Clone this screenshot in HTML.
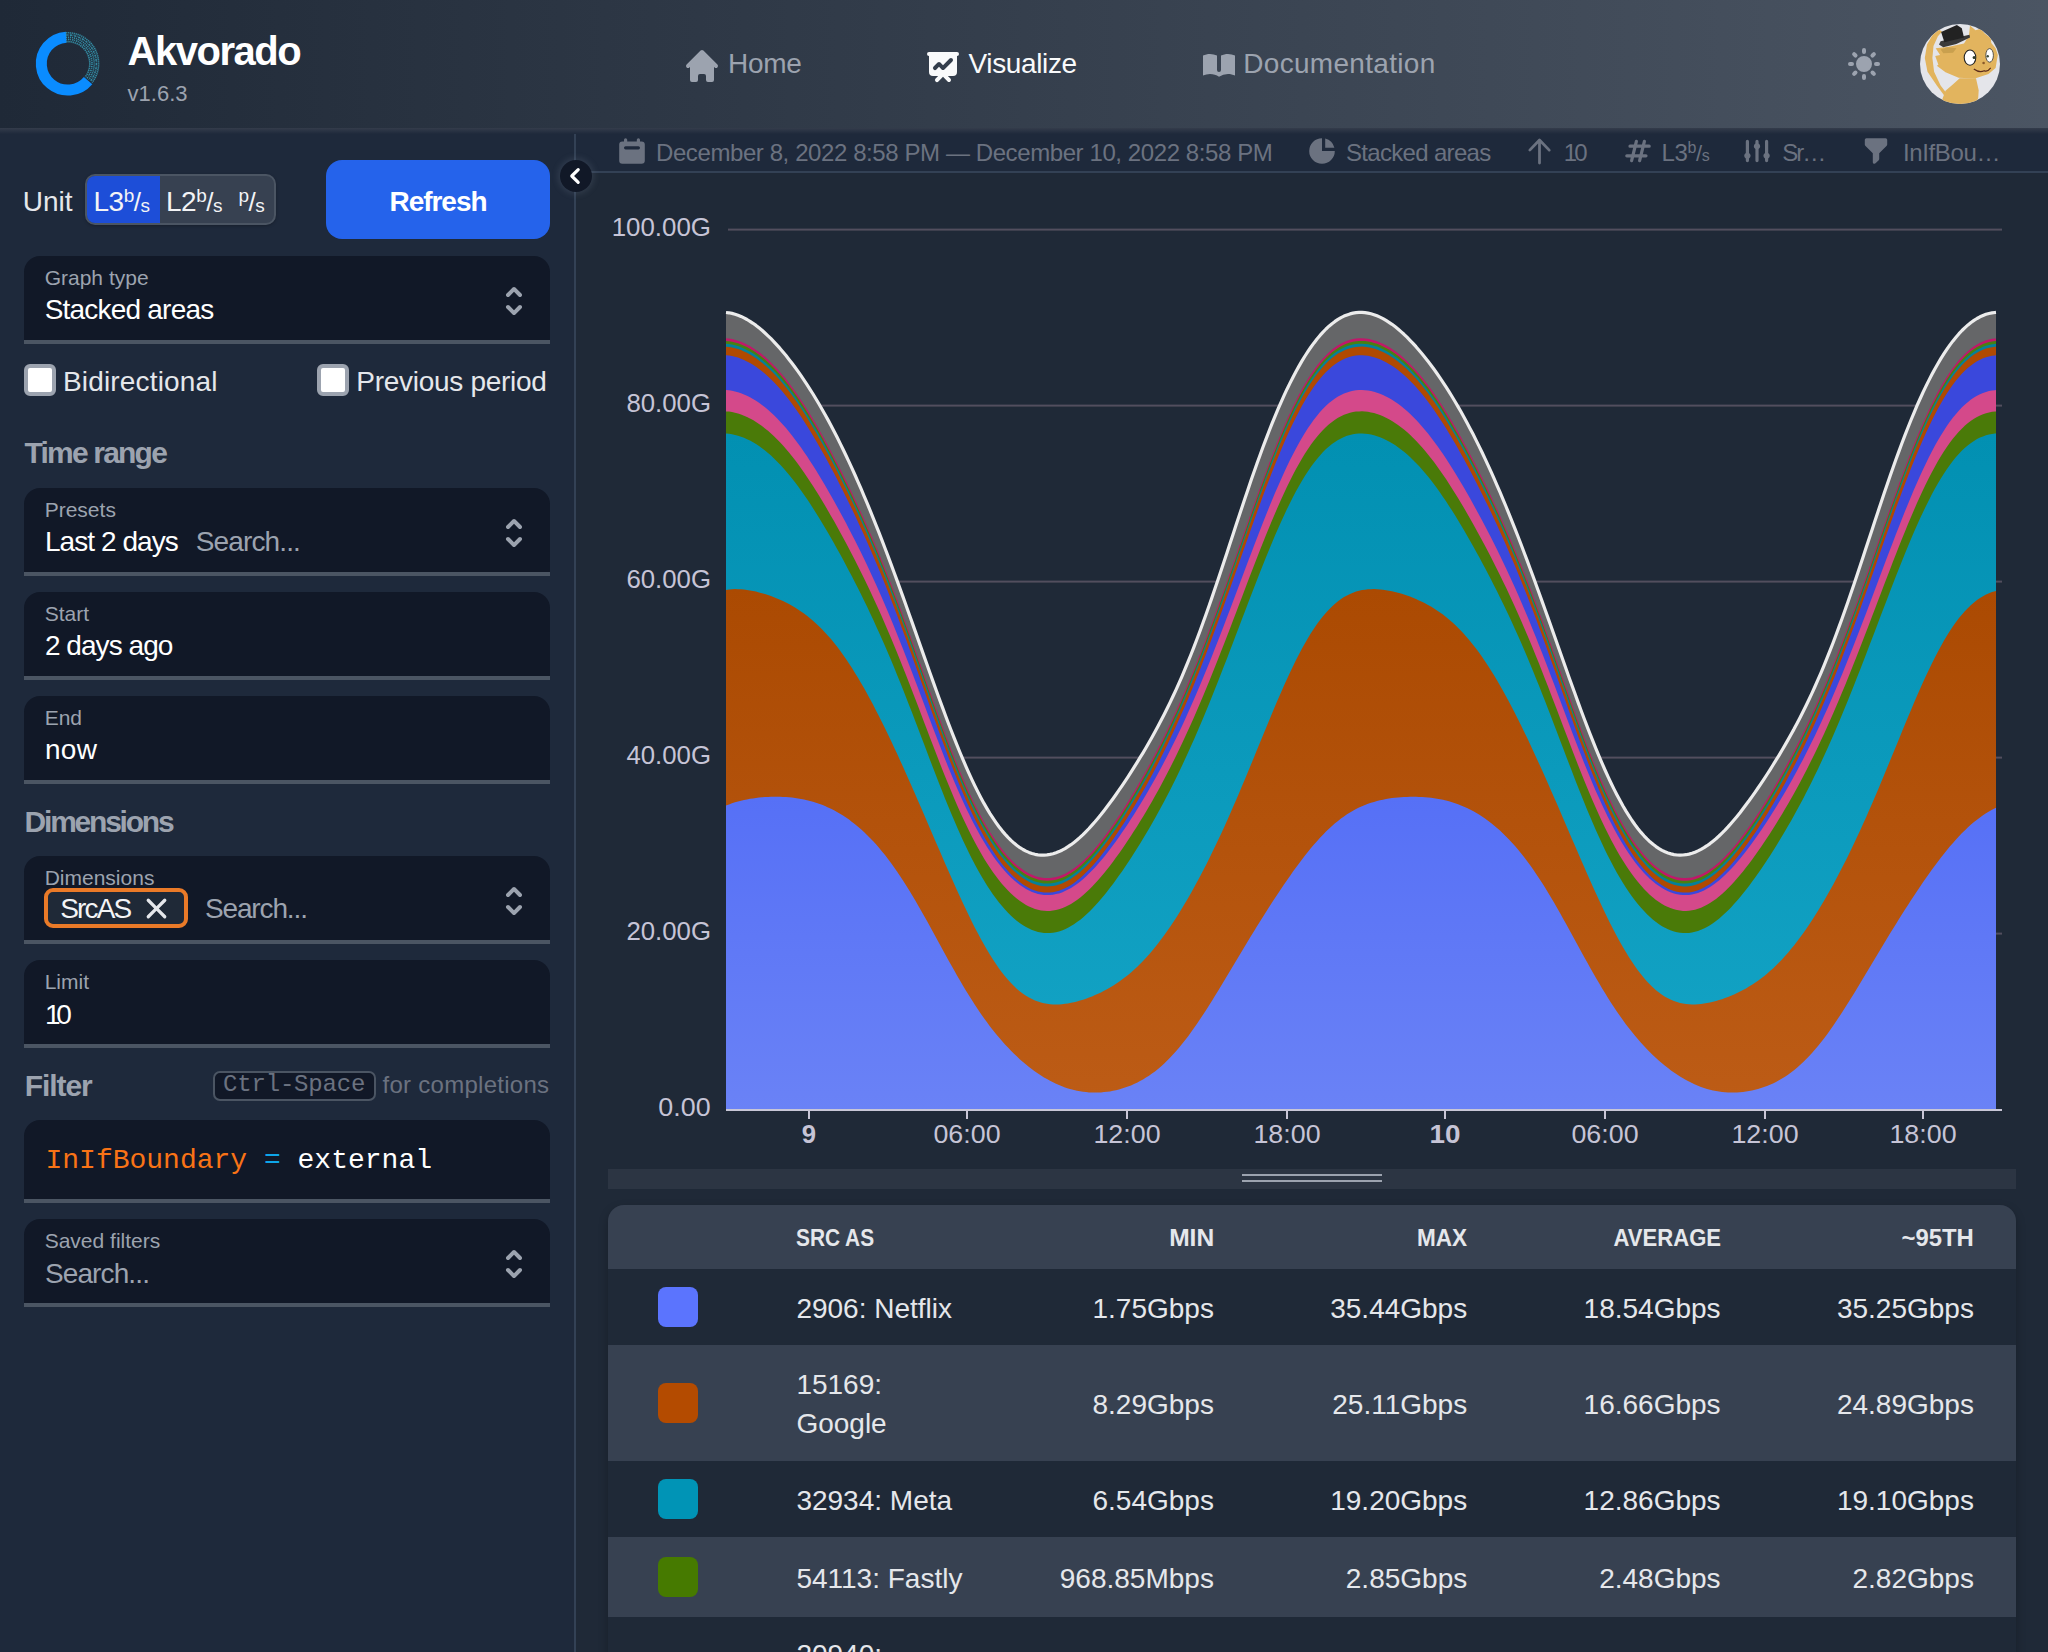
<!DOCTYPE html><html><head><meta charset="utf-8"><style>
html,body{margin:0;padding:0;}
body{width:2048px;height:1652px;overflow:hidden;background:#1f2937;position:relative;font-family:'Liberation Sans',sans-serif;}
.a{position:absolute;}
@media (max-width:1400px){html{zoom:0.5;}}
.t{position:absolute;white-space:nowrap;line-height:1;}

</style></head><body>
<div class="a" style="left:0px;top:0px;width:2048px;height:128px;background:linear-gradient(to right,#1f2937,#4b5563);"></div>
<div class="a" style="left:0px;top:128px;width:576px;height:1524px;background:#1e293b;"></div>
<div class="a" style="left:576px;top:128px;width:1472px;height:45px;background:#1e293b;"></div>
<div class="a" style="left:0px;top:128px;width:2048px;height:6px;background:linear-gradient(to bottom,#343c4b,rgba(30,41,59,0));"></div>
<svg class="a" style="left:28px;top:24px" width="80" height="80" viewBox="0 0 80 80"><circle cx="39.8" cy="39.6" r="26.5" fill="none" stroke="#0a8cff" stroke-width="11" stroke-dasharray="104.07 400" transform="rotate(40 39.8 39.6)"/><path d="M38.27 17.65 A22.0 22.0 0 0 1 57.14 53.14" fill="none" stroke="#38a3bd" stroke-width="1.6" stroke-dasharray="1.4 0.7" opacity="0.8"/><path d="M38.11 15.46 A24.2 24.2 0 0 1 58.87 54.50" fill="none" stroke="#38a3bd" stroke-width="1.6" stroke-dasharray="0.9 0.9 1.6 0.6" opacity="0.8"/><path d="M37.96 13.26 A26.4 26.4 0 0 1 60.60 55.85" fill="none" stroke="#38a3bd" stroke-width="1.6" stroke-dasharray="1.2 0.8" opacity="0.8"/><path d="M37.80 11.07 A28.6 28.6 0 0 1 62.34 57.21" fill="none" stroke="#38a3bd" stroke-width="1.6" stroke-dasharray="2 0.6 0.8 0.8" opacity="0.8"/><path d="M37.65 8.88 A30.8 30.8 0 0 1 64.07 58.56" fill="none" stroke="#38a3bd" stroke-width="1.6" stroke-dasharray="1.3 0.7" opacity="0.8"/></svg>
<div class="t" style="top:30.7px;font-size:40px;color:#ffffff;font-weight:bold;font-family:'Liberation Sans',sans-serif;letter-spacing:-1.46px;left:127.5px;">Akvorado</div>
<div class="t" style="top:82.7px;font-size:22px;color:#9ca3af;font-weight:normal;font-family:'Liberation Sans',sans-serif;letter-spacing:0.02px;left:127.5px;">v1.6.3</div>
<svg class="a" style="left:682.0px;top:46.0px;" width="40.0" height="40.0" viewBox="0 0 20 20"><path fill="#9ca3af" fill-rule="evenodd" d="M10.707 2.293a1 1 0 00-1.414 0l-7 7a1 1 0 001.414 1.414L4 10.414V17a1 1 0 001 1h2a1 1 0 001-1v-2a1 1 0 011-1h2a1 1 0 011 1v2a1 1 0 001 1h2a1 1 0 001-1v-6.586l.293.293a1 1 0 001.414-1.414l-7-7z"/></svg>
<div class="t" style="top:49.7px;font-size:28px;color:#9ca3af;font-weight:normal;font-family:'Liberation Sans',sans-serif;letter-spacing:-0.30px;left:728.0px;">Home</div>
<svg class="a" style="left:923.4px;top:46.0px;" width="40.0" height="40.0" viewBox="0 0 20 20"><path fill="#f9fafb" fill-rule="evenodd" d="M3 3a1 1 0 000 2v8a2 2 0 002 2h2.586l-1.293 1.293a1 1 0 101.414 1.414L10 15.414l2.293 2.293a1 1 0 001.414-1.414L12.414 15H15a2 2 0 002-2V5a1 1 0 100-2H3zm11.707 4.707a1 1 0 00-1.414-1.414L10 9.586 8.707 8.293a1 1 0 00-1.414 0l-2 2a1 1 0 101.414 1.414L8 10.414l1.293 1.293a1 1 0 001.414 0l4-4z"/></svg>
<div class="t" style="top:49.7px;font-size:28px;color:#f9fafb;font-weight:normal;font-family:'Liberation Sans',sans-serif;letter-spacing:-0.36px;left:968.5px;">Visualize</div>
<svg class="a" style="left:1198.8px;top:45.7px;" width="40.0" height="40.0" viewBox="0 0 20 20"><path fill="#9ca3af" fill-rule="evenodd" d="M9 4.804A7.968 7.968 0 005.5 4c-1.255 0-2.443.29-3.5.804v10A7.969 7.969 0 015.5 14c1.669 0 3.218.51 4.5 1.385A7.962 7.962 0 0114.5 14c1.255 0 2.443.29 3.5.804v-10A7.968 7.968 0 0014.5 4c-1.255 0-2.443.29-3.5.804V12a1 1 0 11-2 0V4.804z"/></svg>
<div class="t" style="top:49.7px;font-size:28px;color:#9ca3af;font-weight:normal;font-family:'Liberation Sans',sans-serif;letter-spacing:0.30px;left:1243.3px;">Documentation</div>
<svg class="a" style="left:1844.0px;top:44.0px;" width="40.0" height="40.0" viewBox="0 0 20 20"><path fill="#9ca3af" fill-rule="evenodd" d="M10 2a1 1 0 011 1v1a1 1 0 11-2 0V3a1 1 0 011-1zm4 8a4 4 0 11-8 0 4 4 0 018 0zm-.464 4.95l.707.707a1 1 0 001.414-1.414l-.707-.707a1 1 0 00-1.414 1.414zm2.12-10.607a1 1 0 010 1.414l-.706.707a1 1 0 11-1.414-1.414l.707-.707a1 1 0 011.414 0zM17 11a1 1 0 100-2h-1a1 1 0 100 2h1zm-7 4a1 1 0 011 1v1a1 1 0 11-2 0v-1a1 1 0 011-1zM5.05 6.464A1 1 0 106.465 5.05l-.708-.707a1 1 0 00-1.414 1.414l.707.707zm1.414 8.486l-.707.707a1 1 0 01-1.414-1.414l.707-.707a1 1 0 011.414 1.414zM4 11a1 1 0 100-2H3a1 1 0 000 2h1z"/></svg>
<svg class="a" style="left:1920px;top:24px" width="80" height="80" viewBox="0 0 80 80"><defs><clipPath id="av"><circle cx="40" cy="40" r="40"/></clipPath></defs><g clip-path="url(#av)"><rect width="80" height="80" fill="#e4e5ea"/><polygon points="25.5,73.3 16.8,61.4 7.5,47.7 4.8,34.1 7.0,20.5 13.0,10.2 19.0,5.8 22.2,7.4 17.9,12.3 13.5,22.1 12.4,34.1 14.1,47.7 20.6,61.4 28.8,72.3" fill="#e2b45e"/><polygon points="39.7,54.3 33.1,60.3 25.5,66.8 22.2,75.5 27.7,83.1 54.9,83.1 58.2,73.9 58.7,66.3 56.0,54.3" fill="#e2b45e"/><polygon points="15.7,24.3 20.1,30.9 15.2,31.9 18.4,40.7 16.8,41.8 25.5,48.3 38.6,53.7 54.9,54.6 68.5,49.9 75.6,43.9 77.8,30.9 75.6,24.3 71.3,18.9 70.7,14.0 64.7,9.6 60.9,4.7 55.5,6.3 50.0,1.4 48.9,11.8 44.0,19.4 28.8,22.7" fill="#e2b45e"/><polygon points="20.6,25.4 27.7,23.2 36.4,24.3 33.1,28.7 23.3,29.2" fill="#c9a04e"/><polygon points="19.0,20.5 20.6,17.2 49.5,10.7 50.0,13.4 36.4,20.0 23.3,23.2" fill="#3a3a3a"/><polygon points="21.1,8.0 36.9,0.9 41.8,4.2 44.0,13.4 24.4,18.3" fill="#222222"/><ellipse cx="50.0" cy="33.6" rx="5.8" ry="7.6" fill="#fff" stroke="#222" stroke-width="1.1"/><ellipse cx="69.6" cy="31.4" rx="3.8" ry="6.8" fill="#fff" stroke="#333" stroke-width="0.8"/><circle cx="54.1" cy="33.6" r="1.5" fill="#2a3a2a"/><circle cx="67.7" cy="32.2" r="1.2" fill="#3a4a3a"/><circle cx="63.6" cy="39.0" r="1.3" fill="#8a5a2a"/><path d="M53.8 45.0 Q59.3 49.1 64.2 46.7 Q67.4 48.4 70.7 43.9" stroke="#5a2a1a" stroke-width="1.1" fill="none"/></g></svg>
<div class="a" style="left:574px;top:134px;width:2px;height:1518px;background:#334155;"></div>
<div class="t" style="top:187.5px;font-size:28px;color:#e5e7eb;font-weight:normal;font-family:'Liberation Sans',sans-serif;letter-spacing:0.00px;left:22.7px;">Unit</div>
<div class="a" style="left:85px;top:174px;width:191px;height:51px;box-sizing:border-box;border:2px solid #4b5563;border-radius:10px;background:#374151;overflow:hidden;box-shadow:0 1px 3px rgba(0,0,0,.25);"></div>
<div class="a" style="left:87px;top:176px;width:73px;height:47px;background:#1d4ed8;border-radius:8px 0 0 8px;"></div>
<div class="t" style="left:93.5px;top:187.5px;font-size:28px;color:#f3f4f6;letter-spacing:-0.5px">L3<span style="font-size:19px;position:relative;top:-9px;">b</span><span style="font-size:26px;">/</span><span style="font-size:19px;position:relative;top:1px;">s</span></div>
<div class="t" style="left:166.0px;top:187.5px;font-size:28px;color:#f3f4f6;letter-spacing:-0.5px">L2<span style="font-size:19px;position:relative;top:-9px;">b</span><span style="font-size:26px;">/</span><span style="font-size:19px;position:relative;top:1px;">s</span></div>
<div class="t" style="left:238.5px;top:187.5px;font-size:28px;color:#f3f4f6;letter-spacing:-0.5px"><span style="font-size:19px;position:relative;top:-9px;">p</span><span style="font-size:26px;">/</span><span style="font-size:19px;position:relative;top:1px;">s</span></div>
<div class="a" style="left:326px;top:160px;width:224px;height:79px;background:#2563eb;border-radius:16px;"></div>
<div class="t" style="top:187.7px;font-size:28px;color:#ffffff;font-weight:bold;font-family:'Liberation Sans',sans-serif;letter-spacing:-1.05px;left:438.0px;transform:translateX(-50%);">Refresh</div>
<div class="a" style="left:24px;top:256px;width:526px;height:84px;background:#111827;border-radius:16px 16px 0 0;"></div>
<div class="a" style="left:24px;top:340px;width:526px;height:4px;background:#4b5563;"></div>
<div class="t" style="top:266.8px;font-size:21px;color:#9ca3af;font-weight:normal;font-family:'Liberation Sans',sans-serif;left:44.7px;">Graph type</div>
<div class="t" style="top:295.8px;font-size:28px;color:#ffffff;font-weight:normal;font-family:'Liberation Sans',sans-serif;letter-spacing:-0.79px;left:44.7px;">Stacked areas</div>
<svg class="a" style="left:493.5px;top:280.5px;" width="40.0" height="40.0" viewBox="0 0 20 20"><path fill="#9ca3af" fill-rule="evenodd" d="M10 3a1 1 0 01.707.293l3 3a1 1 0 01-1.414 1.414L10 5.414 7.707 7.707a1 1 0 01-1.414-1.414l3-3A1 1 0 0110 3zm-3.707 9.293a1 1 0 011.414 0L10 14.586l2.293-2.293a1 1 0 011.414 1.414l-3 3a1 1 0 01-1.414 0l-3-3a1 1 0 010-1.414z"/></svg>
<div class="a" style="left:24px;top:364px;width:32px;height:32px;box-sizing:border-box;background:#ffffff;border:4px solid #9ca3af;border-radius:6px;"></div>
<div class="t" style="top:367.6px;font-size:28px;color:#e5e7eb;font-weight:normal;font-family:'Liberation Sans',sans-serif;letter-spacing:0.16px;left:63.0px;">Bidirectional</div>
<div class="a" style="left:317px;top:364px;width:32px;height:32px;box-sizing:border-box;background:#ffffff;border:4px solid #9ca3af;border-radius:6px;"></div>
<div class="t" style="top:367.6px;font-size:28px;color:#e5e7eb;font-weight:normal;font-family:'Liberation Sans',sans-serif;letter-spacing:-0.28px;left:356.3px;">Previous period</div>
<div class="t" style="top:438.3px;font-size:30px;color:#9ca3af;font-weight:bold;font-family:'Liberation Sans',sans-serif;letter-spacing:-1.81px;left:24.6px;">Time range</div>
<div class="a" style="left:24px;top:488px;width:526px;height:84px;background:#111827;border-radius:16px 16px 0 0;"></div>
<div class="a" style="left:24px;top:572px;width:526px;height:4px;background:#4b5563;"></div>
<div class="t" style="top:498.8px;font-size:21px;color:#9ca3af;font-weight:normal;font-family:'Liberation Sans',sans-serif;left:44.7px;">Presets</div>
<div class="t" style="top:527.5px;font-size:28px;color:#ffffff;font-weight:normal;font-family:'Liberation Sans',sans-serif;letter-spacing:-0.93px;left:44.9px;">Last 2 days</div>
<div class="t" style="top:527.5px;font-size:28px;color:#9ca3af;font-weight:normal;font-family:'Liberation Sans',sans-serif;letter-spacing:-0.88px;left:195.8px;">Search...</div>
<svg class="a" style="left:493.5px;top:512.5px;" width="40.0" height="40.0" viewBox="0 0 20 20"><path fill="#9ca3af" fill-rule="evenodd" d="M10 3a1 1 0 01.707.293l3 3a1 1 0 01-1.414 1.414L10 5.414 7.707 7.707a1 1 0 01-1.414-1.414l3-3A1 1 0 0110 3zm-3.707 9.293a1 1 0 011.414 0L10 14.586l2.293-2.293a1 1 0 011.414 1.414l-3 3a1 1 0 01-1.414 0l-3-3a1 1 0 010-1.414z"/></svg>
<div class="a" style="left:24px;top:592px;width:526px;height:84px;background:#111827;border-radius:16px 16px 0 0;"></div>
<div class="a" style="left:24px;top:676px;width:526px;height:4px;background:#4b5563;"></div>
<div class="t" style="top:602.8px;font-size:21px;color:#9ca3af;font-weight:normal;font-family:'Liberation Sans',sans-serif;left:44.7px;">Start</div>
<div class="t" style="top:632.3px;font-size:28px;color:#ffffff;font-weight:normal;font-family:'Liberation Sans',sans-serif;letter-spacing:-0.95px;left:44.9px;">2 days ago</div>
<div class="a" style="left:24px;top:696px;width:526px;height:84px;background:#111827;border-radius:16px 16px 0 0;"></div>
<div class="a" style="left:24px;top:780px;width:526px;height:4px;background:#4b5563;"></div>
<div class="t" style="top:706.8px;font-size:21px;color:#9ca3af;font-weight:normal;font-family:'Liberation Sans',sans-serif;left:44.7px;">End</div>
<div class="t" style="top:736.3px;font-size:28px;color:#ffffff;font-weight:normal;font-family:'Liberation Sans',sans-serif;letter-spacing:0.31px;left:44.9px;">now</div>
<div class="t" style="top:806.5px;font-size:30px;color:#9ca3af;font-weight:bold;font-family:'Liberation Sans',sans-serif;letter-spacing:-2.23px;left:24.6px;">Dimensions</div>
<div class="a" style="left:24px;top:856px;width:526px;height:84px;background:#111827;border-radius:16px 16px 0 0;"></div>
<div class="a" style="left:24px;top:940px;width:526px;height:4px;background:#4b5563;"></div>
<div class="t" style="top:866.8px;font-size:21px;color:#9ca3af;font-weight:normal;font-family:'Liberation Sans',sans-serif;left:44.7px;">Dimensions</div>
<div class="a" style="left:44px;top:888px;width:144px;height:40px;box-sizing:border-box;background:#1f2937;border:4px solid #ea7a28;border-radius:9px;"></div>
<div class="t" style="top:895.2px;font-size:28px;color:#f3f4f6;font-weight:normal;font-family:'Liberation Sans',sans-serif;letter-spacing:-1.84px;left:60.2px;">SrcAS</div>
<svg class="a" style="left:139.6px;top:891.8px;" width="33.0" height="33.0" viewBox="0 0 20 20"><path fill="#e5e7eb" fill-rule="evenodd" d="M4.293 4.293a1 1 0 011.414 0L10 8.586l4.293-4.293a1 1 0 111.414 1.414L11.414 10l4.293 4.293a1 1 0 01-1.414 1.414L10 11.414l-4.293 4.293a1 1 0 01-1.414-1.414L8.586 10 4.293 5.707a1 1 0 010-1.414z"/></svg>
<div class="t" style="top:895.2px;font-size:28px;color:#9ca3af;font-weight:normal;font-family:'Liberation Sans',sans-serif;letter-spacing:-1.13px;left:204.9px;">Search...</div>
<svg class="a" style="left:493.5px;top:880.5px;" width="40.0" height="40.0" viewBox="0 0 20 20"><path fill="#9ca3af" fill-rule="evenodd" d="M10 3a1 1 0 01.707.293l3 3a1 1 0 01-1.414 1.414L10 5.414 7.707 7.707a1 1 0 01-1.414-1.414l3-3A1 1 0 0110 3zm-3.707 9.293a1 1 0 011.414 0L10 14.586l2.293-2.293a1 1 0 011.414 1.414l-3 3a1 1 0 01-1.414 0l-3-3a1 1 0 010-1.414z"/></svg>
<div class="a" style="left:24px;top:960px;width:526px;height:84px;background:#111827;border-radius:16px 16px 0 0;"></div>
<div class="a" style="left:24px;top:1044px;width:526px;height:4px;background:#4b5563;"></div>
<div class="t" style="top:970.8px;font-size:21px;color:#9ca3af;font-weight:normal;font-family:'Liberation Sans',sans-serif;left:44.7px;">Limit</div>
<div class="t" style="top:1000.7px;font-size:28px;color:#ffffff;font-weight:normal;font-family:'Liberation Sans',sans-serif;letter-spacing:-4.16px;left:44.9px;">10</div>
<div class="t" style="top:1070.6px;font-size:30px;color:#9ca3af;font-weight:bold;font-family:'Liberation Sans',sans-serif;letter-spacing:-1.07px;left:24.8px;">Filter</div>
<div class="a" style="left:213px;top:1071px;width:163px;height:30px;box-sizing:border-box;border:2px solid #4b5563;border-radius:7px;background:#111827;"></div>
<div class="t" style="top:1073.1px;font-size:24px;color:#6b7280;font-weight:normal;font-family:'Liberation Mono',monospace;letter-spacing:-0.18px;left:223.0px;">Ctrl-Space</div>
<div class="t" style="top:1073.1px;font-size:24px;color:#6b7280;font-weight:normal;font-family:'Liberation Sans',sans-serif;letter-spacing:0.27px;right:1498.7px;">for completions</div>
<div class="a" style="left:24px;top:1120px;width:526px;height:79px;background:#111827;border-radius:16px 16px 0 0;"></div>
<div class="a" style="left:24px;top:1199px;width:526px;height:4px;background:#4b5563;"></div>
<div class="t" style="left:45.5px;top:1146.9px;font-size:28px;font-family:'Liberation Mono',monospace;color:#fff;"><span style="color:#f97316">InIfBoundary</span> <span style="color:#0ea5e9">=</span> external</div>
<div class="a" style="left:24px;top:1219px;width:526px;height:84px;background:#111827;border-radius:16px 16px 0 0;"></div>
<div class="a" style="left:24px;top:1303px;width:526px;height:4px;background:#4b5563;"></div>
<div class="t" style="top:1229.8px;font-size:21px;color:#9ca3af;font-weight:normal;font-family:'Liberation Sans',sans-serif;left:44.7px;">Saved filters</div>
<div class="t" style="top:1259.7px;font-size:28px;color:#9ca3af;font-weight:normal;font-family:'Liberation Sans',sans-serif;letter-spacing:-0.88px;left:44.9px;">Search...</div>
<svg class="a" style="left:493.5px;top:1243.5px;" width="40.0" height="40.0" viewBox="0 0 20 20"><path fill="#9ca3af" fill-rule="evenodd" d="M10 3a1 1 0 01.707.293l3 3a1 1 0 01-1.414 1.414L10 5.414 7.707 7.707a1 1 0 01-1.414-1.414l3-3A1 1 0 0110 3zm-3.707 9.293a1 1 0 011.414 0L10 14.586l2.293-2.293a1 1 0 011.414 1.414l-3 3a1 1 0 01-1.414 0l-3-3a1 1 0 010-1.414z"/></svg>
<div class="a" style="left:576px;top:171px;width:1472px;height:2px;background:#334155;"></div>
<svg class="a" style="left:615.7px;top:134.8px;" width="32.0" height="32.0" viewBox="0 0 20 20"><path fill="#6b7280" fill-rule="evenodd" d="M6 2a1 1 0 00-1 1v1H4a2 2 0 00-2 2v10a2 2 0 002 2h12a2 2 0 002-2V6a2 2 0 00-2-2h-1V3a1 1 0 10-2 0v1H7V3a1 1 0 00-1-1zm0 5a1 1 0 000 2h8a1 1 0 100-2H6z"/></svg>
<div class="t" style="top:140.6px;font-size:24px;color:#6b7280;font-weight:normal;font-family:'Liberation Sans',sans-serif;letter-spacing:-0.41px;left:656.0px;">December 8, 2022 8:58 PM — December 10, 2022 8:58 PM</div>
<svg class="a" style="left:1305.8px;top:134.8px;" width="32.0" height="32.0" viewBox="0 0 20 20"><path fill="#6b7280" fill-rule="evenodd" d="M2 10a8 8 0 018-8v8h8a8 8 0 11-16 0z M12 2.252A8.014 8.014 0 0117.748 8H12V2.252z"/></svg>
<div class="t" style="top:140.6px;font-size:24px;color:#6b7280;font-weight:normal;font-family:'Liberation Sans',sans-serif;letter-spacing:-0.68px;left:1346.0px;">Stacked areas</div>
<svg class="a" style="left:1521.0px;top:132.9px;" width="37.0" height="37.0" viewBox="0 0 20 20"><path fill="#6b7280" fill-rule="evenodd" d="M10 17a.75.75 0 01-.75-.75V5.612L5.29 9.77a.75.75 0 01-1.08-1.04l5.25-5.5a.75.75 0 011.08 0l5.25 5.5a.75.75 0 11-1.08 1.04l-3.96-4.158V16.25A.75.75 0 0110 17z"/></svg>
<div class="t" style="top:140.6px;font-size:24px;color:#6b7280;font-weight:normal;font-family:'Liberation Sans',sans-serif;letter-spacing:-2.69px;left:1563.7px;">10</div>
<svg class="a" style="left:1621.8px;top:134.8px;" width="32.0" height="32.0" viewBox="0 0 20 20"><path fill="#6b7280" fill-rule="evenodd" d="M9.243 3.03a1 1 0 01.727 1.213L9.53 6h2.94l.56-2.243a1 1 0 111.94.486L14.53 6H17a1 1 0 110 2h-2.97l-1 4H15a1 1 0 110 2h-2.47l-.56 2.242a1 1 0 11-1.94-.485L10.47 14H7.53l-.56 2.242a1 1 0 11-1.94-.485L5.47 14H3a1 1 0 110-2h2.97l1-4H5a1 1 0 110-2h2.47l.56-2.243a1 1 0 011.213-.727zM9.03 8l-1 4h2.938l1-4H9.031z"/></svg>
<div class="t" style="left:1661.5px;top:140.6px;font-size:24px;color:#6b7280;letter-spacing:-0.4px">L3<span style="font-size:16px;position:relative;top:-8px;">b</span><span style="font-size:22px;">/</span><span style="font-size:16px;">s</span></div>
<svg class="a" style="left:1741.4px;top:134.8px;" width="32.0" height="32.0" viewBox="0 0 20 20"><path fill="#6b7280" fill-rule="evenodd" d="M5 4a1 1 0 00-2 0v7.268a2 2 0 000 3.464V16a1 1 0 102 0v-1.268a2 2 0 000-3.464V4zM11 4a1 1 0 10-2 0v1.268a2 2 0 000 3.464V16a1 1 0 102 0V8.732a2 2 0 000-3.464V4zM16 3a1 1 0 011 1v7.268a2 2 0 010 3.464V16a1 1 0 11-2 0v-1.268a2 2 0 010-3.464V4a1 1 0 011-1z"/></svg>
<div class="t" style="top:140.6px;font-size:24px;color:#6b7280;font-weight:normal;font-family:'Liberation Sans',sans-serif;letter-spacing:-1.91px;left:1782.2px;">Sr…</div>
<svg class="a" style="left:1860.2px;top:134.8px;" width="32.0" height="32.0" viewBox="0 0 20 20"><path fill="#6b7280" fill-rule="evenodd" d="M3 3a1 1 0 011-1h12a1 1 0 011 1v3a1 1 0 01-.293.707L12 11.414V15a1 1 0 01-.293.707l-2 2A1 1 0 018 17v-5.586L3.293 6.707A1 1 0 013 6V3z"/></svg>
<div class="t" style="top:140.6px;font-size:24px;color:#6b7280;font-weight:normal;font-family:'Liberation Sans',sans-serif;letter-spacing:-0.35px;left:1902.9px;">InIfBou…</div>
<svg class="a" style="left:0;top:0" width="2048" height="1652" viewBox="0 0 2048 1652"><rect x="728" y="228.6" width="1274" height="2" fill="#524e5e"/><rect x="728" y="404.6" width="1274" height="2" fill="#524e5e"/><rect x="728" y="580.6" width="1274" height="2" fill="#524e5e"/><rect x="728" y="756.6" width="1274" height="2" fill="#524e5e"/><rect x="728" y="932.6" width="1274" height="2" fill="#524e5e"/><defs><linearGradient id="gN" x1="0" y1="0" x2="0" y2="1" gradientUnits="objectBoundingBox"><stop offset="0" stop-color="#5670f6"/><stop offset="1" stop-color="#6a82f6"/></linearGradient><linearGradient id="gG" x1="0" y1="0" x2="0" y2="1"><stop offset="0" stop-color="#ab4a02"/><stop offset="1" stop-color="#bd5c16"/></linearGradient><linearGradient id="gM" x1="0" y1="0" x2="0" y2="1"><stop offset="0" stop-color="#0290b2"/><stop offset="1" stop-color="#14a4c6"/></linearGradient></defs><polygon points="726.0,1110 726.0,312.5 729.0,312.8 732.0,313.4 735.0,314.2 738.0,315.2 741.0,316.4 744.0,317.9 747.0,319.5 750.0,321.3 753.0,323.3 756.0,325.4 759.0,327.8 762.0,330.3 765.0,333.0 768.0,335.8 771.0,338.7 774.0,341.8 777.0,345.1 780.0,348.4 783.0,352.0 786.0,355.6 789.0,359.4 792.0,363.2 795.0,367.3 798.0,371.4 801.0,375.7 804.0,380.1 807.0,384.6 810.0,389.3 813.0,394.0 816.0,399.0 819.0,404.0 822.0,409.2 825.0,414.5 828.0,419.9 831.0,425.5 834.0,431.2 837.0,437.1 840.0,443.1 843.0,449.2 846.0,455.5 849.0,461.9 852.0,468.4 855.0,475.0 858.0,481.8 861.0,488.7 864.0,495.8 867.0,502.9 870.0,510.2 873.0,517.6 876.0,525.1 879.0,532.7 882.0,540.4 885.0,548.2 888.0,556.1 891.0,564.1 894.0,572.2 897.0,580.4 900.0,588.6 903.0,596.9 906.0,605.3 909.0,613.7 912.0,622.1 915.0,630.6 918.0,639.1 921.0,647.6 924.0,656.1 927.0,664.5 930.0,673.0 933.0,681.4 936.0,689.7 939.0,698.0 942.0,706.1 945.0,714.2 948.0,722.2 951.0,730.0 954.0,737.7 957.0,745.2 960.0,752.5 963.0,759.6 966.0,766.6 969.0,773.3 972.0,779.8 975.0,786.1 978.0,792.1 981.0,797.9 984.0,803.4 987.0,808.6 990.0,813.6 993.0,818.2 996.0,822.6 999.0,826.8 1002.0,830.6 1005.0,834.1 1008.0,837.4 1011.0,840.4 1014.0,843.1 1017.0,845.5 1020.0,847.7 1023.0,849.5 1026.0,851.1 1029.0,852.4 1032.0,853.5 1035.0,854.3 1038.0,854.8 1041.0,855.1 1044.0,855.1 1047.0,854.9 1050.0,854.4 1053.0,853.7 1056.0,852.7 1059.0,851.6 1062.0,850.2 1065.0,848.6 1068.0,846.7 1071.0,844.7 1074.0,842.4 1077.0,840.0 1080.0,837.4 1083.0,834.6 1086.0,831.6 1089.0,828.5 1092.0,825.2 1095.0,821.8 1098.0,818.2 1101.0,814.6 1104.0,810.7 1107.0,806.8 1110.0,802.8 1113.0,798.7 1116.0,794.5 1119.0,790.2 1122.0,785.8 1125.0,781.3 1128.0,776.8 1131.0,772.1 1134.0,767.4 1137.0,762.6 1140.0,757.7 1143.0,752.8 1146.0,747.7 1149.0,742.5 1152.0,737.2 1155.0,731.8 1158.0,726.3 1161.0,720.6 1164.0,714.8 1167.0,708.8 1170.0,702.6 1173.0,696.3 1176.0,689.8 1179.0,683.1 1182.0,676.3 1185.0,669.2 1188.0,661.9 1191.0,654.5 1194.0,646.9 1197.0,639.0 1200.0,631.0 1203.0,622.8 1206.0,614.5 1209.0,606.0 1212.0,597.4 1215.0,588.6 1218.0,579.7 1221.0,570.8 1224.0,561.8 1227.0,552.7 1230.0,543.6 1233.0,534.5 1236.0,525.3 1239.0,516.3 1242.0,507.2 1245.0,498.3 1248.0,489.4 1251.0,480.6 1254.0,472.0 1257.0,463.5 1260.0,455.2 1263.0,447.0 1266.0,439.1 1269.0,431.3 1272.0,423.7 1275.0,416.4 1278.0,409.2 1281.0,402.3 1284.0,395.7 1287.0,389.2 1290.0,383.1 1293.0,377.2 1296.0,371.5 1299.0,366.1 1302.0,360.9 1305.0,356.0 1308.0,351.4 1311.0,347.0 1314.0,342.9 1317.0,339.0 1320.0,335.4 1323.0,332.1 1326.0,329.0 1329.0,326.2 1332.0,323.7 1335.0,321.4 1338.0,319.4 1341.0,317.6 1344.0,316.1 1347.0,314.9 1350.0,313.9 1353.0,313.1 1356.0,312.6 1359.0,312.4 1362.0,312.4 1365.0,312.6 1368.0,313.1 1371.0,313.8 1374.0,314.7 1377.0,315.8 1380.0,317.1 1383.0,318.6 1386.0,320.4 1389.0,322.3 1392.0,324.3 1395.0,326.6 1398.0,329.0 1401.0,331.6 1404.0,334.3 1407.0,337.2 1410.0,340.3 1413.0,343.4 1416.0,346.7 1419.0,350.2 1422.0,353.8 1425.0,357.5 1428.0,361.3 1431.0,365.2 1434.0,369.3 1437.0,373.5 1440.0,377.9 1443.0,382.3 1446.0,386.9 1449.0,391.6 1452.0,396.5 1455.0,401.5 1458.0,406.6 1461.0,411.8 1464.0,417.2 1467.0,422.7 1470.0,428.4 1473.0,434.1 1476.0,440.1 1479.0,446.1 1482.0,452.3 1485.0,458.6 1488.0,465.1 1491.0,471.7 1494.0,478.4 1497.0,485.3 1500.0,492.2 1503.0,499.3 1506.0,506.5 1509.0,513.9 1512.0,521.3 1515.0,528.9 1518.0,536.5 1521.0,544.3 1524.0,552.2 1527.0,560.1 1530.0,568.2 1533.0,576.3 1536.0,584.5 1539.0,592.8 1542.0,601.1 1545.0,609.5 1548.0,617.9 1551.0,626.3 1554.0,634.8 1557.0,643.3 1560.0,651.8 1563.0,660.3 1566.0,668.8 1569.0,677.2 1572.0,685.5 1575.0,693.8 1578.0,702.1 1581.0,710.2 1584.0,718.2 1587.0,726.1 1590.0,733.8 1593.0,741.4 1596.0,748.9 1599.0,756.1 1602.0,763.1 1605.0,770.0 1608.0,776.6 1611.0,783.0 1614.0,789.1 1617.0,795.0 1620.0,800.6 1623.0,806.0 1626.0,811.1 1629.0,815.9 1632.0,820.5 1635.0,824.7 1638.0,828.7 1641.0,832.4 1644.0,835.8 1647.0,838.9 1650.0,841.8 1653.0,844.3 1656.0,846.6 1659.0,848.6 1662.0,850.4 1665.0,851.8 1668.0,853.0 1671.0,853.9 1674.0,854.6 1677.0,855.0 1680.0,855.1 1683.0,855.0 1686.0,854.7 1689.0,854.1 1692.0,853.2 1695.0,852.2 1698.0,850.9 1701.0,849.4 1704.0,847.7 1707.0,845.7 1710.0,843.6 1713.0,841.2 1716.0,838.7 1719.0,836.0 1722.0,833.1 1725.0,830.1 1728.0,826.9 1731.0,823.5 1734.0,820.0 1737.0,816.4 1740.0,812.7 1743.0,808.8 1746.0,804.8 1749.0,800.8 1752.0,796.6 1755.0,792.3 1758.0,788.0 1761.0,783.6 1764.0,779.1 1767.0,774.5 1770.0,769.8 1773.0,765.0 1776.0,760.2 1779.0,755.3 1782.0,750.2 1785.0,745.1 1788.0,739.9 1791.0,734.5 1794.0,729.1 1797.0,723.4 1800.0,717.7 1803.0,711.8 1806.0,705.7 1809.0,699.5 1812.0,693.1 1815.0,686.5 1818.0,679.7 1821.0,672.8 1824.0,665.6 1827.0,658.2 1830.0,650.7 1833.0,643.0 1836.0,635.0 1839.0,626.9 1842.0,618.7 1845.0,610.3 1848.0,601.7 1851.0,593.0 1854.0,584.2 1857.0,575.3 1860.0,566.3 1863.0,557.2 1866.0,548.1 1869.0,539.0 1872.0,529.9 1875.0,520.8 1878.0,511.7 1881.0,502.7 1884.0,493.8 1887.0,485.0 1890.0,476.3 1893.0,467.8 1896.0,459.3 1899.0,451.1 1902.0,443.0 1905.0,435.1 1908.0,427.5 1911.0,420.0 1914.0,412.8 1917.0,405.7 1920.0,399.0 1923.0,392.4 1926.0,386.1 1929.0,380.1 1932.0,374.3 1935.0,368.7 1938.0,363.5 1941.0,358.4 1944.0,353.7 1947.0,349.2 1950.0,344.9 1953.0,340.9 1956.0,337.2 1959.0,333.7 1962.0,330.5 1965.0,327.6 1968.0,324.9 1971.0,322.5 1974.0,320.4 1977.0,318.5 1980.0,316.8 1983.0,315.5 1986.0,314.3 1989.0,313.5 1992.0,312.9 1995.0,312.5 1996.0,312.4 1996.0,1110" fill="#656668"/><polygon points="726.0,1110 726.0,338.3 729.0,338.6 732.0,339.1 735.0,339.8 738.0,340.7 741.0,341.8 744.0,343.0 747.0,344.5 750.0,346.1 753.0,347.9 756.0,349.9 759.0,352.0 762.0,354.3 765.0,356.8 768.0,359.5 771.0,362.4 774.0,365.4 777.0,368.6 780.0,371.9 783.0,375.5 786.0,379.1 789.0,383.0 792.0,387.0 795.0,391.1 798.0,395.4 801.0,399.9 804.0,404.5 807.0,409.2 810.0,414.1 813.0,419.0 816.0,424.1 819.0,429.3 822.0,434.7 825.0,440.1 828.0,445.6 831.0,451.2 834.0,456.9 837.0,462.7 840.0,468.6 843.0,474.5 846.0,480.6 849.0,486.7 852.0,492.9 855.0,499.3 858.0,505.7 861.0,512.2 864.0,518.8 867.0,525.5 870.0,532.4 873.0,539.3 876.0,546.4 879.0,553.6 882.0,560.9 885.0,568.3 888.0,575.9 891.0,583.6 894.0,591.4 897.0,599.3 900.0,607.3 903.0,615.5 906.0,623.7 909.0,632.0 912.0,640.4 915.0,648.8 918.0,657.3 921.0,665.8 924.0,674.3 927.0,682.9 930.0,691.4 933.0,699.8 936.0,708.2 939.0,716.6 942.0,724.8 945.0,732.9 948.0,740.9 951.0,748.7 954.0,756.4 957.0,763.9 960.0,771.2 963.0,778.3 966.0,785.2 969.0,791.9 972.0,798.4 975.0,804.6 978.0,810.5 981.0,816.3 984.0,821.7 987.0,827.0 990.0,831.9 993.0,836.6 996.0,841.1 999.0,845.3 1002.0,849.3 1005.0,853.0 1008.0,856.4 1011.0,859.6 1014.0,862.5 1017.0,865.2 1020.0,867.6 1023.0,869.8 1026.0,871.7 1029.0,873.4 1032.0,874.8 1035.0,876.0 1038.0,876.9 1041.0,877.5 1044.0,877.9 1047.0,878.1 1050.0,878.0 1053.0,877.6 1056.0,877.0 1059.0,876.2 1062.0,875.1 1065.0,873.7 1068.0,872.1 1071.0,870.3 1074.0,868.3 1077.0,866.0 1080.0,863.6 1083.0,860.9 1086.0,858.0 1089.0,854.9 1092.0,851.7 1095.0,848.3 1098.0,844.7 1101.0,841.0 1104.0,837.1 1107.0,833.1 1110.0,828.9 1113.0,824.7 1116.0,820.3 1119.0,815.8 1122.0,811.2 1125.0,806.5 1128.0,801.7 1131.0,796.8 1134.0,791.8 1137.0,786.7 1140.0,781.5 1143.0,776.3 1146.0,770.9 1149.0,765.4 1152.0,759.8 1155.0,754.1 1158.0,748.3 1161.0,742.4 1164.0,736.3 1167.0,730.2 1170.0,723.9 1173.0,717.5 1176.0,710.9 1179.0,704.3 1182.0,697.5 1185.0,690.5 1188.0,683.4 1191.0,676.2 1194.0,668.9 1197.0,661.5 1200.0,653.9 1203.0,646.2 1206.0,638.4 1209.0,630.4 1212.0,622.4 1215.0,614.3 1218.0,606.0 1221.0,597.7 1224.0,589.4 1227.0,580.9 1230.0,572.5 1233.0,563.9 1236.0,555.4 1239.0,546.8 1242.0,538.3 1245.0,529.7 1248.0,521.2 1251.0,512.7 1254.0,504.3 1257.0,495.9 1260.0,487.6 1263.0,479.5 1266.0,471.4 1269.0,463.5 1272.0,455.7 1275.0,448.1 1278.0,440.6 1281.0,433.4 1284.0,426.3 1287.0,419.5 1290.0,412.9 1293.0,406.6 1296.0,400.5 1299.0,394.6 1302.0,389.1 1305.0,383.8 1308.0,378.8 1311.0,374.1 1314.0,369.7 1317.0,365.6 1320.0,361.8 1323.0,358.3 1326.0,355.2 1329.0,352.2 1332.0,349.6 1335.0,347.3 1338.0,345.3 1341.0,343.5 1344.0,342.0 1347.0,340.8 1350.0,339.8 1353.0,339.1 1356.0,338.6 1359.0,338.3 1362.0,338.3 1365.0,338.5 1368.0,338.8 1371.0,339.4 1374.0,340.2 1377.0,341.2 1380.0,342.4 1383.0,343.7 1386.0,345.2 1389.0,347.0 1392.0,348.9 1395.0,350.9 1398.0,353.2 1401.0,355.6 1404.0,358.2 1407.0,360.9 1410.0,363.9 1413.0,367.0 1416.0,370.2 1419.0,373.7 1422.0,377.3 1425.0,381.0 1428.0,385.0 1431.0,389.0 1434.0,393.3 1437.0,397.7 1440.0,402.2 1443.0,406.8 1446.0,411.6 1449.0,416.5 1452.0,421.6 1455.0,426.7 1458.0,432.0 1461.0,437.3 1464.0,442.8 1467.0,448.4 1470.0,454.0 1473.0,459.8 1476.0,465.6 1479.0,471.5 1482.0,477.5 1485.0,483.6 1488.0,489.8 1491.0,496.1 1494.0,502.5 1497.0,508.9 1500.0,515.5 1503.0,522.2 1506.0,528.9 1509.0,535.8 1512.0,542.8 1515.0,550.0 1518.0,557.2 1521.0,564.6 1524.0,572.1 1527.0,579.7 1530.0,587.5 1533.0,595.3 1536.0,603.3 1539.0,611.4 1542.0,619.6 1545.0,627.8 1548.0,636.2 1551.0,644.6 1554.0,653.1 1557.0,661.6 1560.0,670.1 1563.0,678.6 1566.0,687.1 1569.0,695.6 1572.0,704.0 1575.0,712.4 1578.0,720.7 1581.0,728.9 1584.0,736.9 1587.0,744.8 1590.0,752.6 1593.0,760.2 1596.0,767.6 1599.0,774.8 1602.0,781.8 1605.0,788.6 1608.0,795.2 1611.0,801.5 1614.0,807.6 1617.0,813.4 1620.0,819.0 1623.0,824.4 1626.0,829.5 1629.0,834.3 1632.0,838.9 1635.0,843.2 1638.0,847.3 1641.0,851.1 1644.0,854.7 1647.0,858.0 1650.0,861.1 1653.0,863.9 1656.0,866.4 1659.0,868.7 1662.0,870.8 1665.0,872.6 1668.0,874.1 1671.0,875.4 1674.0,876.5 1677.0,877.3 1680.0,877.8 1683.0,878.1 1686.0,878.1 1689.0,877.8 1692.0,877.4 1695.0,876.6 1698.0,875.6 1701.0,874.4 1704.0,873.0 1707.0,871.3 1710.0,869.3 1713.0,867.2 1716.0,864.8 1719.0,862.2 1722.0,859.5 1725.0,856.5 1728.0,853.3 1731.0,850.0 1734.0,846.5 1737.0,842.9 1740.0,839.1 1743.0,835.1 1746.0,831.0 1749.0,826.8 1752.0,822.5 1755.0,818.1 1758.0,813.5 1761.0,808.9 1764.0,804.1 1767.0,799.3 1770.0,794.3 1773.0,789.3 1776.0,784.1 1779.0,778.9 1782.0,773.6 1785.0,768.1 1788.0,762.6 1791.0,757.0 1794.0,751.2 1797.0,745.3 1800.0,739.4 1803.0,733.3 1806.0,727.0 1809.0,720.7 1812.0,714.2 1815.0,707.6 1818.0,700.9 1821.0,694.0 1824.0,687.0 1827.0,679.9 1830.0,672.6 1833.0,665.2 1836.0,657.7 1839.0,650.0 1842.0,642.3 1845.0,634.4 1848.0,626.4 1851.0,618.3 1854.0,610.2 1857.0,601.9 1860.0,593.6 1863.0,585.2 1866.0,576.7 1869.0,568.2 1872.0,559.7 1875.0,551.1 1878.0,542.6 1881.0,534.0 1884.0,525.5 1887.0,516.9 1890.0,508.5 1893.0,500.1 1896.0,491.8 1899.0,483.5 1902.0,475.4 1905.0,467.4 1908.0,459.6 1911.0,451.9 1914.0,444.3 1917.0,437.0 1920.0,429.8 1923.0,422.9 1926.0,416.2 1929.0,409.7 1932.0,403.5 1935.0,397.5 1938.0,391.8 1941.0,386.4 1944.0,381.3 1947.0,376.4 1950.0,371.9 1953.0,367.6 1956.0,363.7 1959.0,360.1 1962.0,356.7 1965.0,353.7 1968.0,350.9 1971.0,348.4 1974.0,346.3 1977.0,344.4 1980.0,342.7 1983.0,341.4 1986.0,340.3 1989.0,339.4 1992.0,338.8 1995.0,338.4 1996.0,338.4 1996.0,1110" fill="#c0186a"/><polygon points="726.0,1110 726.0,341.0 729.0,341.3 732.0,341.7 735.0,342.4 738.0,343.3 741.0,344.4 744.0,345.7 747.0,347.1 750.0,348.7 753.0,350.5 756.0,352.5 759.0,354.7 762.0,357.0 765.0,359.5 768.0,362.2 771.0,365.0 774.0,368.0 777.0,371.2 780.0,374.6 783.0,378.1 786.0,381.8 789.0,385.6 792.0,389.6 795.0,393.8 798.0,398.1 801.0,402.5 804.0,407.1 807.0,411.8 810.0,416.7 813.0,421.7 816.0,426.8 819.0,432.0 822.0,437.3 825.0,442.7 828.0,448.2 831.0,453.8 834.0,459.5 837.0,465.3 840.0,471.2 843.0,477.2 846.0,483.2 849.0,489.3 852.0,495.6 855.0,501.9 858.0,508.3 861.0,514.8 864.0,521.4 867.0,528.2 870.0,535.0 873.0,542.0 876.0,549.0 879.0,556.2 882.0,563.5 885.0,571.0 888.0,578.5 891.0,586.2 894.0,594.0 897.0,601.9 900.0,610.0 903.0,618.1 906.0,626.3 909.0,634.6 912.0,643.0 915.0,651.5 918.0,659.9 921.0,668.5 924.0,677.0 927.0,685.5 930.0,694.0 933.0,702.5 936.0,710.9 939.0,719.2 942.0,727.4 945.0,735.6 948.0,743.5 951.0,751.4 954.0,759.1 957.0,766.6 960.0,773.9 963.0,781.0 966.0,787.9 969.0,794.5 972.0,801.0 975.0,807.2 978.0,813.2 981.0,818.9 984.0,824.4 987.0,829.6 990.0,834.6 993.0,839.3 996.0,843.7 999.0,847.9 1002.0,851.9 1005.0,855.6 1008.0,859.0 1011.0,862.2 1014.0,865.2 1017.0,867.8 1020.0,870.3 1023.0,872.4 1026.0,874.4 1029.0,876.0 1032.0,877.5 1035.0,878.6 1038.0,879.5 1041.0,880.2 1044.0,880.6 1047.0,880.7 1050.0,880.6 1053.0,880.3 1056.0,879.7 1059.0,878.8 1062.0,877.7 1065.0,876.4 1068.0,874.8 1071.0,873.0 1074.0,870.9 1077.0,868.7 1080.0,866.2 1083.0,863.5 1086.0,860.6 1089.0,857.6 1092.0,854.3 1095.0,850.9 1098.0,847.3 1101.0,843.6 1104.0,839.7 1107.0,835.7 1110.0,831.6 1113.0,827.3 1116.0,822.9 1119.0,818.5 1122.0,813.9 1125.0,809.2 1128.0,804.4 1131.0,799.5 1134.0,794.5 1137.0,789.4 1140.0,784.2 1143.0,778.9 1146.0,773.5 1149.0,768.0 1152.0,762.4 1155.0,756.7 1158.0,750.9 1161.0,745.0 1164.0,739.0 1167.0,732.8 1170.0,726.5 1173.0,720.1 1176.0,713.6 1179.0,706.9 1182.0,700.1 1185.0,693.2 1188.0,686.1 1191.0,678.9 1194.0,671.6 1197.0,664.1 1200.0,656.5 1203.0,648.8 1206.0,641.0 1209.0,633.1 1212.0,625.0 1215.0,616.9 1218.0,608.7 1221.0,600.4 1224.0,592.0 1227.0,583.6 1230.0,575.1 1233.0,566.6 1236.0,558.0 1239.0,549.5 1242.0,540.9 1245.0,532.4 1248.0,523.8 1251.0,515.3 1254.0,506.9 1257.0,498.6 1260.0,490.3 1263.0,482.1 1266.0,474.0 1269.0,466.1 1272.0,458.3 1275.0,450.7 1278.0,443.3 1281.0,436.0 1284.0,429.0 1287.0,422.1 1290.0,415.5 1293.0,409.2 1296.0,403.1 1299.0,397.3 1302.0,391.7 1305.0,386.4 1308.0,381.5 1311.0,376.8 1314.0,372.4 1317.0,368.3 1320.0,364.5 1323.0,361.0 1326.0,357.8 1329.0,354.9 1332.0,352.3 1335.0,350.0 1338.0,347.9 1341.0,346.2 1344.0,344.7 1347.0,343.4 1350.0,342.5 1353.0,341.7 1356.0,341.2 1359.0,341.0 1362.0,340.9 1365.0,341.1 1368.0,341.5 1371.0,342.1 1374.0,342.9 1377.0,343.8 1380.0,345.0 1383.0,346.4 1386.0,347.9 1389.0,349.6 1392.0,351.5 1395.0,353.6 1398.0,355.8 1401.0,358.2 1404.0,360.8 1407.0,363.6 1410.0,366.5 1413.0,369.6 1416.0,372.9 1419.0,376.3 1422.0,379.9 1425.0,383.7 1428.0,387.6 1431.0,391.7 1434.0,395.9 1437.0,400.3 1440.0,404.8 1443.0,409.5 1446.0,414.3 1449.0,419.2 1452.0,424.2 1455.0,429.4 1458.0,434.6 1461.0,440.0 1464.0,445.5 1467.0,451.0 1470.0,456.7 1473.0,462.4 1476.0,468.2 1479.0,474.2 1482.0,480.2 1485.0,486.3 1488.0,492.4 1491.0,498.7 1494.0,505.1 1497.0,511.6 1500.0,518.1 1503.0,524.8 1506.0,531.6 1509.0,538.5 1512.0,545.5 1515.0,552.6 1518.0,559.9 1521.0,567.2 1524.0,574.7 1527.0,582.4 1530.0,590.1 1533.0,598.0 1536.0,605.9 1539.0,614.0 1542.0,622.2 1545.0,630.5 1548.0,638.8 1551.0,647.2 1554.0,655.7 1557.0,664.2 1560.0,672.7 1563.0,681.3 1566.0,689.8 1569.0,698.3 1572.0,706.7 1575.0,715.1 1578.0,723.3 1581.0,731.5 1584.0,739.6 1587.0,747.5 1590.0,755.2 1593.0,762.8 1596.0,770.2 1599.0,777.4 1602.0,784.5 1605.0,791.2 1608.0,797.8 1611.0,804.1 1614.0,810.2 1617.0,816.1 1620.0,821.7 1623.0,827.0 1626.0,832.1 1629.0,837.0 1632.0,841.5 1635.0,845.9 1638.0,850.0 1641.0,853.8 1644.0,857.3 1647.0,860.7 1650.0,863.7 1653.0,866.5 1656.0,869.1 1659.0,871.4 1662.0,873.4 1665.0,875.2 1668.0,876.8 1671.0,878.1 1674.0,879.1 1677.0,879.9 1680.0,880.4 1683.0,880.7 1686.0,880.7 1689.0,880.5 1692.0,880.0 1695.0,879.3 1698.0,878.3 1701.0,877.1 1704.0,875.6 1707.0,873.9 1710.0,872.0 1713.0,869.8 1716.0,867.5 1719.0,864.9 1722.0,862.1 1725.0,859.1 1728.0,856.0 1731.0,852.7 1734.0,849.2 1737.0,845.5 1740.0,841.7 1743.0,837.8 1746.0,833.7 1749.0,829.5 1752.0,825.1 1755.0,820.7 1758.0,816.2 1761.0,811.5 1764.0,806.8 1767.0,801.9 1770.0,797.0 1773.0,791.9 1776.0,786.8 1779.0,781.5 1782.0,776.2 1785.0,770.8 1788.0,765.2 1791.0,759.6 1794.0,753.8 1797.0,748.0 1800.0,742.0 1803.0,735.9 1806.0,729.7 1809.0,723.3 1812.0,716.9 1815.0,710.2 1818.0,703.5 1821.0,696.6 1824.0,689.6 1827.0,682.5 1830.0,675.2 1833.0,667.8 1836.0,660.3 1839.0,652.7 1842.0,644.9 1845.0,637.0 1848.0,629.1 1851.0,621.0 1854.0,612.8 1857.0,604.5 1860.0,596.2 1863.0,587.8 1866.0,579.4 1869.0,570.9 1872.0,562.3 1875.0,553.8 1878.0,545.2 1881.0,536.6 1884.0,528.1 1887.0,519.6 1890.0,511.1 1893.0,502.7 1896.0,494.4 1899.0,486.2 1902.0,478.1 1905.0,470.1 1908.0,462.2 1911.0,454.5 1914.0,447.0 1917.0,439.6 1920.0,432.5 1923.0,425.5 1926.0,418.8 1929.0,412.3 1932.0,406.1 1935.0,400.2 1938.0,394.5 1941.0,389.0 1944.0,383.9 1947.0,379.1 1950.0,374.5 1953.0,370.3 1956.0,366.3 1959.0,362.7 1962.0,359.4 1965.0,356.3 1968.0,353.5 1971.0,351.1 1974.0,348.9 1977.0,347.0 1980.0,345.4 1983.0,344.0 1986.0,342.9 1989.0,342.1 1992.0,341.4 1995.0,341.1 1996.0,341.0 1996.0,1110" fill="#4a8010"/><polygon points="726.0,1110 726.0,343.8 729.0,344.1 732.0,344.6 735.0,345.3 738.0,346.1 741.0,347.2 744.0,348.5 747.0,349.9 750.0,351.5 753.0,353.3 756.0,355.3 759.0,357.5 762.0,359.8 765.0,362.3 768.0,365.0 771.0,367.8 774.0,370.8 777.0,374.0 780.0,377.4 783.0,380.9 786.0,384.6 789.0,388.4 792.0,392.4 795.0,396.6 798.0,400.9 801.0,405.4 804.0,409.9 807.0,414.7 810.0,419.5 813.0,424.5 816.0,429.6 819.0,434.8 822.0,440.1 825.0,445.5 828.0,451.0 831.0,456.6 834.0,462.3 837.0,468.1 840.0,474.0 843.0,480.0 846.0,486.0 849.0,492.2 852.0,498.4 855.0,504.7 858.0,511.1 861.0,517.6 864.0,524.3 867.0,531.0 870.0,537.8 873.0,544.8 876.0,551.8 879.0,559.0 882.0,566.4 885.0,573.8 888.0,581.3 891.0,589.0 894.0,596.8 897.0,604.8 900.0,612.8 903.0,620.9 906.0,629.1 909.0,637.4 912.0,645.8 915.0,654.3 918.0,662.8 921.0,671.3 924.0,679.8 927.0,688.3 930.0,696.8 933.0,705.3 936.0,713.7 939.0,722.0 942.0,730.3 945.0,738.4 948.0,746.4 951.0,754.2 954.0,761.9 957.0,769.4 960.0,776.7 963.0,783.8 966.0,790.7 969.0,797.4 972.0,803.8 975.0,810.0 978.0,816.0 981.0,821.7 984.0,827.2 987.0,832.4 990.0,837.4 993.0,842.1 996.0,846.6 999.0,850.8 1002.0,854.7 1005.0,858.4 1008.0,861.8 1011.0,865.0 1014.0,868.0 1017.0,870.7 1020.0,873.1 1023.0,875.3 1026.0,877.2 1029.0,878.9 1032.0,880.3 1035.0,881.4 1038.0,882.3 1041.0,883.0 1044.0,883.4 1047.0,883.6 1050.0,883.4 1053.0,883.1 1056.0,882.5 1059.0,881.6 1062.0,880.5 1065.0,879.2 1068.0,877.6 1071.0,875.8 1074.0,873.7 1077.0,871.5 1080.0,869.0 1083.0,866.3 1086.0,863.5 1089.0,860.4 1092.0,857.2 1095.0,853.7 1098.0,850.2 1101.0,846.4 1104.0,842.6 1107.0,838.5 1110.0,834.4 1113.0,830.1 1116.0,825.8 1119.0,821.3 1122.0,816.7 1125.0,812.0 1128.0,807.2 1131.0,802.3 1134.0,797.3 1137.0,792.2 1140.0,787.0 1143.0,781.7 1146.0,776.3 1149.0,770.8 1152.0,765.2 1155.0,759.6 1158.0,753.7 1161.0,747.8 1164.0,741.8 1167.0,735.6 1170.0,729.3 1173.0,722.9 1176.0,716.4 1179.0,709.7 1182.0,702.9 1185.0,696.0 1188.0,688.9 1191.0,681.7 1194.0,674.4 1197.0,666.9 1200.0,659.3 1203.0,651.6 1206.0,643.8 1209.0,635.9 1212.0,627.9 1215.0,619.7 1218.0,611.5 1221.0,603.2 1224.0,594.8 1227.0,586.4 1230.0,577.9 1233.0,569.4 1236.0,560.9 1239.0,552.3 1242.0,543.7 1245.0,535.2 1248.0,526.7 1251.0,518.2 1254.0,509.7 1257.0,501.4 1260.0,493.1 1263.0,484.9 1266.0,476.9 1269.0,468.9 1272.0,461.1 1275.0,453.5 1278.0,446.1 1281.0,438.8 1284.0,431.8 1287.0,425.0 1290.0,418.4 1293.0,412.0 1296.0,405.9 1299.0,400.1 1302.0,394.5 1305.0,389.3 1308.0,384.3 1311.0,379.6 1314.0,375.2 1317.0,371.1 1320.0,367.3 1323.0,363.8 1326.0,360.6 1329.0,357.7 1332.0,355.1 1335.0,352.8 1338.0,350.7 1341.0,349.0 1344.0,347.5 1347.0,346.2 1350.0,345.3 1353.0,344.5 1356.0,344.0 1359.0,343.8 1362.0,343.7 1365.0,343.9 1368.0,344.3 1371.0,344.9 1374.0,345.7 1377.0,346.6 1380.0,347.8 1383.0,349.2 1386.0,350.7 1389.0,352.4 1392.0,354.3 1395.0,356.4 1398.0,358.6 1401.0,361.0 1404.0,363.6 1407.0,366.4 1410.0,369.3 1413.0,372.4 1416.0,375.7 1419.0,379.1 1422.0,382.7 1425.0,386.5 1428.0,390.4 1431.0,394.5 1434.0,398.7 1437.0,403.1 1440.0,407.6 1443.0,412.3 1446.0,417.1 1449.0,422.0 1452.0,427.0 1455.0,432.2 1458.0,437.4 1461.0,442.8 1464.0,448.3 1467.0,453.8 1470.0,459.5 1473.0,465.2 1476.0,471.1 1479.0,477.0 1482.0,483.0 1485.0,489.1 1488.0,495.3 1491.0,501.5 1494.0,507.9 1497.0,514.4 1500.0,520.9 1503.0,527.6 1506.0,534.4 1509.0,541.3 1512.0,548.3 1515.0,555.4 1518.0,562.7 1521.0,570.1 1524.0,577.6 1527.0,585.2 1530.0,592.9 1533.0,600.8 1536.0,608.8 1539.0,616.8 1542.0,625.0 1545.0,633.3 1548.0,641.6 1551.0,650.0 1554.0,658.5 1557.0,667.0 1560.0,675.5 1563.0,684.1 1566.0,692.6 1569.0,701.1 1572.0,709.5 1575.0,717.9 1578.0,726.2 1581.0,734.3 1584.0,742.4 1587.0,750.3 1590.0,758.1 1593.0,765.6 1596.0,773.1 1599.0,780.3 1602.0,787.3 1605.0,794.1 1608.0,800.6 1611.0,806.9 1614.0,813.0 1617.0,818.9 1620.0,824.5 1623.0,829.8 1626.0,834.9 1629.0,839.8 1632.0,844.4 1635.0,848.7 1638.0,852.8 1641.0,856.6 1644.0,860.2 1647.0,863.5 1650.0,866.5 1653.0,869.3 1656.0,871.9 1659.0,874.2 1662.0,876.3 1665.0,878.1 1668.0,879.6 1671.0,880.9 1674.0,881.9 1677.0,882.7 1680.0,883.2 1683.0,883.5 1686.0,883.5 1689.0,883.3 1692.0,882.8 1695.0,882.1 1698.0,881.1 1701.0,879.9 1704.0,878.4 1707.0,876.7 1710.0,874.8 1713.0,872.6 1716.0,870.3 1719.0,867.7 1722.0,864.9 1725.0,861.9 1728.0,858.8 1731.0,855.5 1734.0,852.0 1737.0,848.3 1740.0,844.5 1743.0,840.6 1746.0,836.5 1749.0,832.3 1752.0,828.0 1755.0,823.5 1758.0,819.0 1761.0,814.3 1764.0,809.6 1767.0,804.7 1770.0,799.8 1773.0,794.7 1776.0,789.6 1779.0,784.4 1782.0,779.0 1785.0,773.6 1788.0,768.1 1791.0,762.4 1794.0,756.7 1797.0,750.8 1800.0,744.8 1803.0,738.7 1806.0,732.5 1809.0,726.1 1812.0,719.7 1815.0,713.1 1818.0,706.3 1821.0,699.5 1824.0,692.5 1827.0,685.3 1830.0,678.1 1833.0,670.7 1836.0,663.1 1839.0,655.5 1842.0,647.7 1845.0,639.9 1848.0,631.9 1851.0,623.8 1854.0,615.6 1857.0,607.4 1860.0,599.0 1863.0,590.6 1866.0,582.2 1869.0,573.7 1872.0,565.1 1875.0,556.6 1878.0,548.0 1881.0,539.5 1884.0,530.9 1887.0,522.4 1890.0,513.9 1893.0,505.5 1896.0,497.2 1899.0,489.0 1902.0,480.9 1905.0,472.9 1908.0,465.0 1911.0,457.3 1914.0,449.8 1917.0,442.4 1920.0,435.3 1923.0,428.3 1926.0,421.6 1929.0,415.2 1932.0,408.9 1935.0,403.0 1938.0,397.3 1941.0,391.9 1944.0,386.7 1947.0,381.9 1950.0,377.3 1953.0,373.1 1956.0,369.2 1959.0,365.5 1962.0,362.2 1965.0,359.1 1968.0,356.4 1971.0,353.9 1974.0,351.7 1977.0,349.8 1980.0,348.2 1983.0,346.8 1986.0,345.7 1989.0,344.9 1992.0,344.3 1995.0,343.9 1996.0,343.8 1996.0,1110" fill="#05809a"/><polygon points="726.0,1110 726.0,346.7 729.0,347.0 732.0,347.5 735.0,348.2 738.0,349.0 741.0,350.1 744.0,351.4 747.0,352.8 750.0,354.4 753.0,356.2 756.0,358.2 759.0,360.4 762.0,362.7 765.0,365.2 768.0,367.9 771.0,370.7 774.0,373.7 777.0,376.9 780.0,380.3 783.0,383.8 786.0,387.5 789.0,391.3 792.0,395.3 795.0,399.5 798.0,403.8 801.0,408.3 804.0,412.8 807.0,417.6 810.0,422.4 813.0,427.4 816.0,432.5 819.0,437.7 822.0,443.0 825.0,448.4 828.0,453.9 831.0,459.5 834.0,465.2 837.0,471.0 840.0,476.9 843.0,482.9 846.0,488.9 849.0,495.1 852.0,501.3 855.0,507.6 858.0,514.0 861.0,520.5 864.0,527.2 867.0,533.9 870.0,540.7 873.0,547.7 876.0,554.8 879.0,561.9 882.0,569.3 885.0,576.7 888.0,584.3 891.0,591.9 894.0,599.7 897.0,607.7 900.0,615.7 903.0,623.8 906.0,632.0 909.0,640.4 912.0,648.7 915.0,657.2 918.0,665.7 921.0,674.2 924.0,682.7 927.0,691.2 930.0,699.7 933.0,708.2 936.0,716.6 939.0,724.9 942.0,733.2 945.0,741.3 948.0,749.3 951.0,757.1 954.0,764.8 957.0,772.3 960.0,779.6 963.0,786.7 966.0,793.6 969.0,800.3 972.0,806.7 975.0,812.9 978.0,818.9 981.0,824.6 984.0,830.1 987.0,835.3 990.0,840.3 993.0,845.0 996.0,849.5 999.0,853.7 1002.0,857.6 1005.0,861.3 1008.0,864.8 1011.0,867.9 1014.0,870.9 1017.0,873.6 1020.0,876.0 1023.0,878.2 1026.0,880.1 1029.0,881.8 1032.0,883.2 1035.0,884.3 1038.0,885.3 1041.0,885.9 1044.0,886.3 1047.0,886.5 1050.0,886.3 1053.0,886.0 1056.0,885.4 1059.0,884.5 1062.0,883.4 1065.0,882.1 1068.0,880.5 1071.0,878.7 1074.0,876.6 1077.0,874.4 1080.0,871.9 1083.0,869.2 1086.0,866.4 1089.0,863.3 1092.0,860.1 1095.0,856.6 1098.0,853.1 1101.0,849.3 1104.0,845.5 1107.0,841.5 1110.0,837.3 1113.0,833.0 1116.0,828.7 1119.0,824.2 1122.0,819.6 1125.0,814.9 1128.0,810.1 1131.0,805.2 1134.0,800.2 1137.0,795.1 1140.0,789.9 1143.0,784.6 1146.0,779.2 1149.0,773.7 1152.0,768.2 1155.0,762.5 1158.0,756.6 1161.0,750.7 1164.0,744.7 1167.0,738.5 1170.0,732.2 1173.0,725.8 1176.0,719.3 1179.0,712.6 1182.0,705.8 1185.0,698.9 1188.0,691.8 1191.0,684.6 1194.0,677.3 1197.0,669.8 1200.0,662.2 1203.0,654.5 1206.0,646.7 1209.0,638.8 1212.0,630.8 1215.0,622.6 1218.0,614.4 1221.0,606.1 1224.0,597.7 1227.0,589.3 1230.0,580.8 1233.0,572.3 1236.0,563.8 1239.0,555.2 1242.0,546.6 1245.0,538.1 1248.0,529.6 1251.0,521.1 1254.0,512.6 1257.0,504.3 1260.0,496.0 1263.0,487.8 1266.0,479.8 1269.0,471.8 1272.0,464.0 1275.0,456.4 1278.0,449.0 1281.0,441.7 1284.0,434.7 1287.0,427.9 1290.0,421.3 1293.0,414.9 1296.0,408.8 1299.0,403.0 1302.0,397.4 1305.0,392.2 1308.0,387.2 1311.0,382.5 1314.0,378.1 1317.0,374.0 1320.0,370.2 1323.0,366.7 1326.0,363.5 1329.0,360.6 1332.0,358.0 1335.0,355.7 1338.0,353.6 1341.0,351.9 1344.0,350.4 1347.0,349.2 1350.0,348.2 1353.0,347.4 1356.0,346.9 1359.0,346.7 1362.0,346.6 1365.0,346.8 1368.0,347.2 1371.0,347.8 1374.0,348.6 1377.0,349.6 1380.0,350.7 1383.0,352.1 1386.0,353.6 1389.0,355.3 1392.0,357.2 1395.0,359.3 1398.0,361.5 1401.0,363.9 1404.0,366.5 1407.0,369.3 1410.0,372.2 1413.0,375.3 1416.0,378.6 1419.0,382.0 1422.0,385.6 1425.0,389.4 1428.0,393.3 1431.0,397.4 1434.0,401.6 1437.0,406.0 1440.0,410.5 1443.0,415.2 1446.0,420.0 1449.0,424.9 1452.0,429.9 1455.0,435.1 1458.0,440.3 1461.0,445.7 1464.0,451.2 1467.0,456.7 1470.0,462.4 1473.0,468.1 1476.0,474.0 1479.0,479.9 1482.0,485.9 1485.0,492.0 1488.0,498.2 1491.0,504.4 1494.0,510.8 1497.0,517.3 1500.0,523.8 1503.0,530.5 1506.0,537.3 1509.0,544.2 1512.0,551.2 1515.0,558.3 1518.0,565.6 1521.0,573.0 1524.0,580.5 1527.0,588.1 1530.0,595.8 1533.0,603.7 1536.0,611.7 1539.0,619.7 1542.0,627.9 1545.0,636.2 1548.0,644.5 1551.0,652.9 1554.0,661.4 1557.0,669.9 1560.0,678.4 1563.0,687.0 1566.0,695.5 1569.0,704.0 1572.0,712.4 1575.0,720.8 1578.0,729.1 1581.0,737.2 1584.0,745.3 1587.0,753.2 1590.0,761.0 1593.0,768.5 1596.0,776.0 1599.0,783.2 1602.0,790.2 1605.0,797.0 1608.0,803.5 1611.0,809.9 1614.0,815.9 1617.0,821.8 1620.0,827.4 1623.0,832.7 1626.0,837.8 1629.0,842.7 1632.0,847.3 1635.0,851.6 1638.0,855.7 1641.0,859.5 1644.0,863.1 1647.0,866.4 1650.0,869.4 1653.0,872.2 1656.0,874.8 1659.0,877.1 1662.0,879.2 1665.0,881.0 1668.0,882.5 1671.0,883.8 1674.0,884.8 1677.0,885.6 1680.0,886.1 1683.0,886.4 1686.0,886.4 1689.0,886.2 1692.0,885.7 1695.0,885.0 1698.0,884.0 1701.0,882.8 1704.0,881.3 1707.0,879.6 1710.0,877.7 1713.0,875.5 1716.0,873.2 1719.0,870.6 1722.0,867.8 1725.0,864.9 1728.0,861.7 1731.0,858.4 1734.0,854.9 1737.0,851.2 1740.0,847.4 1743.0,843.5 1746.0,839.4 1749.0,835.2 1752.0,830.9 1755.0,826.4 1758.0,821.9 1761.0,817.2 1764.0,812.5 1767.0,807.6 1770.0,802.7 1773.0,797.6 1776.0,792.5 1779.0,787.3 1782.0,781.9 1785.0,776.5 1788.0,771.0 1791.0,765.3 1794.0,759.6 1797.0,753.7 1800.0,747.7 1803.0,741.6 1806.0,735.4 1809.0,729.0 1812.0,722.6 1815.0,716.0 1818.0,709.2 1821.0,702.4 1824.0,695.4 1827.0,688.2 1830.0,681.0 1833.0,673.6 1836.0,666.0 1839.0,658.4 1842.0,650.6 1845.0,642.8 1848.0,634.8 1851.0,626.7 1854.0,618.5 1857.0,610.3 1860.0,601.9 1863.0,593.5 1866.0,585.1 1869.0,576.6 1872.0,568.0 1875.0,559.5 1878.0,550.9 1881.0,542.4 1884.0,533.8 1887.0,525.3 1890.0,516.8 1893.0,508.4 1896.0,500.1 1899.0,491.9 1902.0,483.8 1905.0,475.8 1908.0,467.9 1911.0,460.2 1914.0,452.7 1917.0,445.3 1920.0,438.2 1923.0,431.2 1926.0,424.5 1929.0,418.1 1932.0,411.8 1935.0,405.9 1938.0,400.2 1941.0,394.8 1944.0,389.6 1947.0,384.8 1950.0,380.3 1953.0,376.0 1956.0,372.1 1959.0,368.4 1962.0,365.1 1965.0,362.0 1968.0,359.3 1971.0,356.8 1974.0,354.6 1977.0,352.7 1980.0,351.1 1983.0,349.7 1986.0,348.6 1989.0,347.8 1992.0,347.2 1995.0,346.8 1996.0,346.7 1996.0,1110" fill="#b04a02"/><polygon points="726.0,1110 726.0,355.3 729.0,355.6 732.0,356.1 735.0,356.8 738.0,357.6 741.0,358.7 744.0,360.0 747.0,361.4 750.0,363.0 753.0,364.8 756.0,366.8 759.0,368.9 762.0,371.3 765.0,373.7 768.0,376.4 771.0,379.2 774.0,382.2 777.0,385.4 780.0,388.8 783.0,392.3 786.0,395.9 789.0,399.8 792.0,403.7 795.0,407.9 798.0,412.2 801.0,416.6 804.0,421.2 807.0,425.9 810.0,430.7 813.0,435.7 816.0,440.7 819.0,445.9 822.0,451.2 825.0,456.6 828.0,462.1 831.0,467.7 834.0,473.3 837.0,479.1 840.0,484.9 843.0,490.9 846.0,496.9 849.0,503.0 852.0,509.2 855.0,515.5 858.0,521.9 861.0,528.4 864.0,535.0 867.0,541.7 870.0,548.5 873.0,555.4 876.0,562.4 879.0,569.6 882.0,576.8 885.0,584.2 888.0,591.8 891.0,599.4 894.0,607.2 897.0,615.1 900.0,623.1 903.0,631.2 906.0,639.3 909.0,647.6 912.0,656.0 915.0,664.4 918.0,672.8 921.0,681.3 924.0,689.8 927.0,698.3 930.0,706.7 933.0,715.2 936.0,723.5 939.0,731.8 942.0,740.0 945.0,748.1 948.0,756.0 951.0,763.8 954.0,771.5 957.0,778.9 960.0,786.2 963.0,793.3 966.0,800.2 969.0,806.8 972.0,813.2 975.0,819.4 978.0,825.3 981.0,831.0 984.0,836.5 987.0,841.7 990.0,846.6 993.0,851.3 996.0,855.8 999.0,860.0 1002.0,863.9 1005.0,867.6 1008.0,871.0 1011.0,874.2 1014.0,877.1 1017.0,879.8 1020.0,882.2 1023.0,884.4 1026.0,886.3 1029.0,887.9 1032.0,889.4 1035.0,890.5 1038.0,891.4 1041.0,892.1 1044.0,892.5 1047.0,892.6 1050.0,892.5 1053.0,892.2 1056.0,891.6 1059.0,890.7 1062.0,889.6 1065.0,888.3 1068.0,886.7 1071.0,884.9 1074.0,882.9 1077.0,880.6 1080.0,878.2 1083.0,875.5 1086.0,872.6 1089.0,869.6 1092.0,866.4 1095.0,863.0 1098.0,859.4 1101.0,855.7 1104.0,851.8 1107.0,847.8 1110.0,843.7 1113.0,839.5 1116.0,835.1 1119.0,830.6 1122.0,826.1 1125.0,821.4 1128.0,816.6 1131.0,811.7 1134.0,806.7 1137.0,801.7 1140.0,796.5 1143.0,791.2 1146.0,785.9 1149.0,780.4 1152.0,774.9 1155.0,769.2 1158.0,763.4 1161.0,757.5 1164.0,751.5 1167.0,745.4 1170.0,739.1 1173.0,732.7 1176.0,726.2 1179.0,719.6 1182.0,712.8 1185.0,705.9 1188.0,698.9 1191.0,691.7 1194.0,684.4 1197.0,677.0 1200.0,669.4 1203.0,661.8 1206.0,654.0 1209.0,646.1 1212.0,638.1 1215.0,630.0 1218.0,621.8 1221.0,613.6 1224.0,605.2 1227.0,596.8 1230.0,588.4 1233.0,579.9 1236.0,571.4 1239.0,562.9 1242.0,554.4 1245.0,545.9 1248.0,537.4 1251.0,528.9 1254.0,520.5 1257.0,512.2 1260.0,504.0 1263.0,495.8 1266.0,487.8 1269.0,479.9 1272.0,472.2 1275.0,464.6 1278.0,457.2 1281.0,449.9 1284.0,442.9 1287.0,436.1 1290.0,429.6 1293.0,423.2 1296.0,417.2 1299.0,411.4 1302.0,405.8 1305.0,400.6 1308.0,395.6 1311.0,391.0 1314.0,386.6 1317.0,382.5 1320.0,378.7 1323.0,375.2 1326.0,372.1 1329.0,369.2 1332.0,366.6 1335.0,364.3 1338.0,362.2 1341.0,360.5 1344.0,359.0 1347.0,357.8 1350.0,356.8 1353.0,356.1 1356.0,355.6 1359.0,355.3 1362.0,355.3 1365.0,355.4 1368.0,355.8 1371.0,356.4 1374.0,357.2 1377.0,358.2 1380.0,359.3 1383.0,360.7 1386.0,362.2 1389.0,363.9 1392.0,365.8 1395.0,367.8 1398.0,370.1 1401.0,372.5 1404.0,375.1 1407.0,377.8 1410.0,380.7 1413.0,383.8 1416.0,387.1 1419.0,390.5 1422.0,394.1 1425.0,397.8 1428.0,401.7 1431.0,405.8 1434.0,410.0 1437.0,414.4 1440.0,418.9 1443.0,423.5 1446.0,428.3 1449.0,433.2 1452.0,438.2 1455.0,443.3 1458.0,448.5 1461.0,453.9 1464.0,459.3 1467.0,464.9 1470.0,470.5 1473.0,476.2 1476.0,482.0 1479.0,487.9 1482.0,493.9 1485.0,499.9 1488.0,506.1 1491.0,512.3 1494.0,518.7 1497.0,525.1 1500.0,531.7 1503.0,538.3 1506.0,545.0 1509.0,551.9 1512.0,558.9 1515.0,566.0 1518.0,573.2 1521.0,580.5 1524.0,588.0 1527.0,595.6 1530.0,603.3 1533.0,611.1 1536.0,619.0 1539.0,627.1 1542.0,635.2 1545.0,643.5 1548.0,651.8 1551.0,660.2 1554.0,668.6 1557.0,677.0 1560.0,685.5 1563.0,694.0 1566.0,702.5 1569.0,710.9 1572.0,719.3 1575.0,727.7 1578.0,735.9 1581.0,744.1 1584.0,752.1 1587.0,759.9 1590.0,767.7 1593.0,775.2 1596.0,782.6 1599.0,789.8 1602.0,796.8 1605.0,803.5 1608.0,810.0 1611.0,816.3 1614.0,822.4 1617.0,828.2 1620.0,833.8 1623.0,839.1 1626.0,844.2 1629.0,849.0 1632.0,853.6 1635.0,857.9 1638.0,862.0 1641.0,865.8 1644.0,869.3 1647.0,872.6 1650.0,875.7 1653.0,878.5 1656.0,881.0 1659.0,883.3 1662.0,885.3 1665.0,887.1 1668.0,888.7 1671.0,890.0 1674.0,891.0 1677.0,891.8 1680.0,892.3 1683.0,892.6 1686.0,892.6 1689.0,892.4 1692.0,891.9 1695.0,891.2 1698.0,890.2 1701.0,889.0 1704.0,887.5 1707.0,885.8 1710.0,883.9 1713.0,881.8 1716.0,879.4 1719.0,876.8 1722.0,874.1 1725.0,871.1 1728.0,868.0 1731.0,864.7 1734.0,861.2 1737.0,857.6 1740.0,853.8 1743.0,849.8 1746.0,845.8 1749.0,841.6 1752.0,837.3 1755.0,832.9 1758.0,828.4 1761.0,823.7 1764.0,819.0 1767.0,814.2 1770.0,809.2 1773.0,804.2 1776.0,799.1 1779.0,793.9 1782.0,788.6 1785.0,783.2 1788.0,777.6 1791.0,772.0 1794.0,766.3 1797.0,760.5 1800.0,754.5 1803.0,748.4 1806.0,742.2 1809.0,735.9 1812.0,729.5 1815.0,722.9 1818.0,716.2 1821.0,709.4 1824.0,702.4 1827.0,695.3 1830.0,688.1 1833.0,680.7 1836.0,673.2 1839.0,665.6 1842.0,657.9 1845.0,650.0 1848.0,642.1 1851.0,634.1 1854.0,625.9 1857.0,617.7 1860.0,609.4 1863.0,601.0 1866.0,592.6 1869.0,584.2 1872.0,575.7 1875.0,567.2 1878.0,558.6 1881.0,550.1 1884.0,541.6 1887.0,533.1 1890.0,524.7 1893.0,516.4 1896.0,508.1 1899.0,499.9 1902.0,491.8 1905.0,483.8 1908.0,476.0 1911.0,468.3 1914.0,460.8 1917.0,453.5 1920.0,446.4 1923.0,439.5 1926.0,432.8 1929.0,426.4 1932.0,420.2 1935.0,414.2 1938.0,408.6 1941.0,403.2 1944.0,398.1 1947.0,393.3 1950.0,388.7 1953.0,384.5 1956.0,380.6 1959.0,376.9 1962.0,373.6 1965.0,370.6 1968.0,367.8 1971.0,365.4 1974.0,363.2 1977.0,361.3 1980.0,359.7 1983.0,358.3 1986.0,357.2 1989.0,356.4 1992.0,355.8 1995.0,355.4 1996.0,355.3 1996.0,1110" fill="#3a48dc"/><polygon points="726.0,1110 726.0,390.1 729.0,390.3 732.0,390.8 735.0,391.4 738.0,392.2 741.0,393.2 744.0,394.4 747.0,395.8 750.0,397.3 753.0,398.9 756.0,400.8 759.0,402.8 762.0,404.9 765.0,407.3 768.0,409.8 771.0,412.4 774.0,415.3 777.0,418.2 780.0,421.4 783.0,424.7 786.0,428.1 789.0,431.7 792.0,435.5 795.0,439.4 798.0,443.4 801.0,447.6 804.0,451.9 807.0,456.3 810.0,460.9 813.0,465.6 816.0,470.3 819.0,475.2 822.0,480.2 825.0,485.3 828.0,490.4 831.0,495.7 834.0,501.0 837.0,506.4 840.0,511.9 843.0,517.5 846.0,523.1 849.0,528.9 852.0,534.7 855.0,540.6 858.0,546.6 861.0,552.6 864.0,558.8 867.0,565.1 870.0,571.4 873.0,577.9 876.0,584.5 879.0,591.2 882.0,598.0 885.0,605.0 888.0,612.0 891.0,619.2 894.0,626.5 897.0,633.9 900.0,641.4 903.0,649.0 906.0,656.7 909.0,664.4 912.0,672.3 915.0,680.2 918.0,688.1 921.0,696.1 924.0,704.1 927.0,712.1 930.0,720.0 933.0,727.9 936.0,735.8 939.0,743.6 942.0,751.3 945.0,758.9 948.0,766.4 951.0,773.7 954.0,780.9 957.0,787.9 960.0,794.8 963.0,801.4 966.0,807.9 969.0,814.1 972.0,820.2 975.0,826.0 978.0,831.5 981.0,836.9 984.0,842.0 987.0,846.9 990.0,851.6 993.0,856.0 996.0,860.2 999.0,864.1 1002.0,867.8 1005.0,871.3 1008.0,874.5 1011.0,877.5 1014.0,880.3 1017.0,882.8 1020.0,885.1 1023.0,887.1 1026.0,889.0 1029.0,890.5 1032.0,891.9 1035.0,893.0 1038.0,893.9 1041.0,894.5 1044.0,894.9 1047.0,895.1 1050.0,895.0 1053.0,894.7 1056.0,894.1 1059.0,893.4 1062.0,892.4 1065.0,891.1 1068.0,889.6 1071.0,888.0 1074.0,886.1 1077.0,884.0 1080.0,881.7 1083.0,879.2 1086.0,876.5 1089.0,873.6 1092.0,870.6 1095.0,867.4 1098.0,864.0 1101.0,860.5 1104.0,856.9 1107.0,853.2 1110.0,849.3 1113.0,845.3 1116.0,841.2 1119.0,836.9 1122.0,832.6 1125.0,828.2 1128.0,823.7 1131.0,819.1 1134.0,814.4 1137.0,809.6 1140.0,804.8 1143.0,799.8 1146.0,794.7 1149.0,789.6 1152.0,784.3 1155.0,779.0 1158.0,773.5 1161.0,768.0 1164.0,762.3 1167.0,756.5 1170.0,750.6 1173.0,744.6 1176.0,738.5 1179.0,732.3 1182.0,725.9 1185.0,719.4 1188.0,712.8 1191.0,706.1 1194.0,699.2 1197.0,692.3 1200.0,685.2 1203.0,678.0 1206.0,670.7 1209.0,663.4 1212.0,655.9 1215.0,648.3 1218.0,640.7 1221.0,632.9 1224.0,625.2 1227.0,617.3 1230.0,609.4 1233.0,601.5 1236.0,593.5 1239.0,585.5 1242.0,577.5 1245.0,569.6 1248.0,561.6 1251.0,553.7 1254.0,545.8 1257.0,538.0 1260.0,530.2 1263.0,522.6 1266.0,515.0 1269.0,507.6 1272.0,500.3 1275.0,493.1 1278.0,486.2 1281.0,479.4 1284.0,472.7 1287.0,466.3 1290.0,460.1 1293.0,454.2 1296.0,448.4 1299.0,442.9 1302.0,437.7 1305.0,432.8 1308.0,428.1 1311.0,423.7 1314.0,419.5 1317.0,415.7 1320.0,412.1 1323.0,408.8 1326.0,405.8 1329.0,403.1 1332.0,400.7 1335.0,398.5 1338.0,396.6 1341.0,394.9 1344.0,393.5 1347.0,392.4 1350.0,391.5 1353.0,390.8 1356.0,390.3 1359.0,390.1 1362.0,390.0 1365.0,390.2 1368.0,390.5 1371.0,391.1 1374.0,391.8 1377.0,392.7 1380.0,393.8 1383.0,395.1 1386.0,396.5 1389.0,398.1 1392.0,399.8 1395.0,401.8 1398.0,403.8 1401.0,406.1 1404.0,408.5 1407.0,411.1 1410.0,413.8 1413.0,416.7 1416.0,419.8 1419.0,423.0 1422.0,426.4 1425.0,429.9 1428.0,433.6 1431.0,437.4 1434.0,441.4 1437.0,445.5 1440.0,449.7 1443.0,454.1 1446.0,458.6 1449.0,463.2 1452.0,467.9 1455.0,472.8 1458.0,477.7 1461.0,482.7 1464.0,487.8 1467.0,493.1 1470.0,498.3 1473.0,503.7 1476.0,509.2 1479.0,514.7 1482.0,520.3 1485.0,526.0 1488.0,531.8 1491.0,537.6 1494.0,543.6 1497.0,549.6 1500.0,555.7 1503.0,561.9 1506.0,568.2 1509.0,574.7 1512.0,581.2 1515.0,587.8 1518.0,594.6 1521.0,601.5 1524.0,608.5 1527.0,615.6 1530.0,622.8 1533.0,630.2 1536.0,637.6 1539.0,645.2 1542.0,652.8 1545.0,660.5 1548.0,668.3 1551.0,676.2 1554.0,684.1 1557.0,692.1 1560.0,700.1 1563.0,708.1 1566.0,716.0 1569.0,724.0 1572.0,731.9 1575.0,739.7 1578.0,747.5 1581.0,755.1 1584.0,762.7 1587.0,770.1 1590.0,777.3 1593.0,784.4 1596.0,791.4 1599.0,798.1 1602.0,804.7 1605.0,811.0 1608.0,817.2 1611.0,823.1 1614.0,828.8 1617.0,834.3 1620.0,839.5 1623.0,844.5 1626.0,849.3 1629.0,853.8 1632.0,858.1 1635.0,862.2 1638.0,866.0 1641.0,869.6 1644.0,872.9 1647.0,876.0 1650.0,878.9 1653.0,881.6 1656.0,884.0 1659.0,886.1 1662.0,888.1 1665.0,889.8 1668.0,891.3 1671.0,892.5 1674.0,893.5 1677.0,894.2 1680.0,894.8 1683.0,895.0 1686.0,895.1 1689.0,894.9 1692.0,894.4 1695.0,893.8 1698.0,892.9 1701.0,891.8 1704.0,890.4 1707.0,888.8 1710.0,887.0 1713.0,885.0 1716.0,882.8 1719.0,880.4 1722.0,877.8 1725.0,875.1 1728.0,872.1 1731.0,869.0 1734.0,865.7 1737.0,862.3 1740.0,858.8 1743.0,855.1 1746.0,851.2 1749.0,847.3 1752.0,843.2 1755.0,839.1 1758.0,834.8 1761.0,830.4 1764.0,826.0 1767.0,821.4 1770.0,816.8 1773.0,812.0 1776.0,807.2 1779.0,802.3 1782.0,797.3 1785.0,792.2 1788.0,787.0 1791.0,781.7 1794.0,776.3 1797.0,770.8 1800.0,765.1 1803.0,759.4 1806.0,753.6 1809.0,747.6 1812.0,741.6 1815.0,735.4 1818.0,729.1 1821.0,722.7 1824.0,716.1 1827.0,709.5 1830.0,702.7 1833.0,695.8 1836.0,688.8 1839.0,681.6 1842.0,674.4 1845.0,667.1 1848.0,659.6 1851.0,652.1 1854.0,644.5 1857.0,636.8 1860.0,629.1 1863.0,621.2 1866.0,613.4 1869.0,605.4 1872.0,597.5 1875.0,589.5 1878.0,581.5 1881.0,573.5 1884.0,565.6 1887.0,557.6 1890.0,549.7 1893.0,541.9 1896.0,534.1 1899.0,526.4 1902.0,518.8 1905.0,511.3 1908.0,503.9 1911.0,496.7 1914.0,489.6 1917.0,482.7 1920.0,476.0 1923.0,469.5 1926.0,463.2 1929.0,457.1 1932.0,451.3 1935.0,445.6 1938.0,440.3 1941.0,435.2 1944.0,430.4 1947.0,425.8 1950.0,421.6 1953.0,417.6 1956.0,413.9 1959.0,410.4 1962.0,407.3 1965.0,404.4 1968.0,401.9 1971.0,399.5 1974.0,397.5 1977.0,395.7 1980.0,394.2 1983.0,392.9 1986.0,391.9 1989.0,391.1 1992.0,390.5 1995.0,390.2 1996.0,390.1 1996.0,1110" fill="#d4498a"/><polygon points="726.0,1110 726.0,411.4 729.0,411.6 732.0,412.1 735.0,412.7 738.0,413.5 741.0,414.5 744.0,415.7 747.0,417.0 750.0,418.5 753.0,420.1 756.0,421.9 759.0,423.9 762.0,426.1 765.0,428.4 768.0,430.8 771.0,433.5 774.0,436.3 777.0,439.2 780.0,442.3 783.0,445.6 786.0,449.0 789.0,452.5 792.0,456.3 795.0,460.1 798.0,464.1 801.0,468.3 804.0,472.5 807.0,476.9 810.0,481.4 813.0,486.0 816.0,490.8 819.0,495.6 822.0,500.5 825.0,505.5 828.0,510.7 831.0,515.9 834.0,521.1 837.0,526.5 840.0,531.9 843.0,537.4 846.0,543.0 849.0,548.7 852.0,554.4 855.0,560.2 858.0,566.2 861.0,572.2 864.0,578.3 867.0,584.5 870.0,590.8 873.0,597.2 876.0,603.7 879.0,610.3 882.0,617.0 885.0,623.9 888.0,630.9 891.0,638.0 894.0,645.2 897.0,652.5 900.0,659.9 903.0,667.4 906.0,675.0 909.0,682.7 912.0,690.5 915.0,698.3 918.0,706.1 921.0,714.0 924.0,721.9 927.0,729.8 930.0,737.7 933.0,745.5 936.0,753.3 939.0,761.0 942.0,768.7 945.0,776.2 948.0,783.6 951.0,790.8 954.0,797.9 957.0,804.9 960.0,811.7 963.0,818.2 966.0,824.6 969.0,830.8 972.0,836.8 975.0,842.5 978.0,848.0 981.0,853.3 984.0,858.4 987.0,863.2 990.0,867.8 993.0,872.2 996.0,876.3 999.0,880.2 1002.0,883.9 1005.0,887.3 1008.0,890.5 1011.0,893.5 1014.0,896.2 1017.0,898.7 1020.0,901.0 1023.0,903.0 1026.0,904.9 1029.0,906.4 1032.0,907.8 1035.0,908.9 1038.0,909.7 1041.0,910.4 1044.0,910.8 1047.0,910.9 1050.0,910.9 1053.0,910.6 1056.0,910.0 1059.0,909.3 1062.0,908.3 1065.0,907.0 1068.0,905.6 1071.0,903.9 1074.0,902.0 1077.0,900.0 1080.0,897.7 1083.0,895.2 1086.0,892.6 1089.0,889.7 1092.0,886.7 1095.0,883.6 1098.0,880.3 1101.0,876.8 1104.0,873.2 1107.0,869.5 1110.0,865.7 1113.0,861.7 1116.0,857.6 1119.0,853.4 1122.0,849.2 1125.0,844.8 1128.0,840.3 1131.0,835.8 1134.0,831.1 1137.0,826.4 1140.0,821.6 1143.0,816.7 1146.0,811.7 1149.0,806.6 1152.0,801.4 1155.0,796.1 1158.0,790.7 1161.0,785.2 1164.0,779.6 1167.0,773.8 1170.0,768.0 1173.0,762.1 1176.0,756.0 1179.0,749.8 1182.0,743.5 1185.0,737.1 1188.0,730.6 1191.0,723.9 1194.0,717.2 1197.0,710.3 1200.0,703.3 1203.0,696.2 1206.0,689.0 1209.0,681.7 1212.0,674.3 1215.0,666.8 1218.0,659.3 1221.0,651.6 1224.0,643.9 1227.0,636.2 1230.0,628.4 1233.0,620.5 1236.0,612.7 1239.0,604.8 1242.0,596.9 1245.0,589.0 1248.0,581.1 1251.0,573.3 1254.0,565.5 1257.0,557.8 1260.0,550.1 1263.0,542.5 1266.0,535.1 1269.0,527.7 1272.0,520.5 1275.0,513.4 1278.0,506.5 1281.0,499.7 1284.0,493.2 1287.0,486.8 1290.0,480.7 1293.0,474.8 1296.0,469.1 1299.0,463.7 1302.0,458.5 1305.0,453.6 1308.0,449.0 1311.0,444.6 1314.0,440.5 1317.0,436.7 1320.0,433.2 1323.0,429.9 1326.0,427.0 1329.0,424.3 1332.0,421.9 1335.0,419.7 1338.0,417.8 1341.0,416.2 1344.0,414.8 1347.0,413.7 1350.0,412.7 1353.0,412.1 1356.0,411.6 1359.0,411.4 1362.0,411.3 1365.0,411.5 1368.0,411.8 1371.0,412.4 1374.0,413.1 1377.0,414.0 1380.0,415.1 1383.0,416.3 1386.0,417.7 1389.0,419.3 1392.0,421.0 1395.0,422.9 1398.0,425.0 1401.0,427.2 1404.0,429.6 1407.0,432.1 1410.0,434.8 1413.0,437.7 1416.0,440.7 1419.0,443.9 1422.0,447.3 1425.0,450.7 1428.0,454.4 1431.0,458.2 1434.0,462.1 1437.0,466.2 1440.0,470.4 1443.0,474.7 1446.0,479.1 1449.0,483.7 1452.0,488.4 1455.0,493.2 1458.0,498.0 1461.0,503.0 1464.0,508.1 1467.0,513.2 1470.0,518.5 1473.0,523.8 1476.0,529.2 1479.0,534.7 1482.0,540.2 1485.0,545.8 1488.0,551.5 1491.0,557.3 1494.0,563.2 1497.0,569.2 1500.0,575.2 1503.0,581.4 1506.0,587.6 1509.0,593.9 1512.0,600.4 1515.0,607.0 1518.0,613.7 1521.0,620.5 1524.0,627.4 1527.0,634.4 1530.0,641.6 1533.0,648.8 1536.0,656.2 1539.0,663.6 1542.0,671.2 1545.0,678.9 1548.0,686.6 1551.0,694.4 1554.0,702.2 1557.0,710.1 1560.0,718.0 1563.0,725.9 1566.0,733.8 1569.0,741.6 1572.0,749.4 1575.0,757.2 1578.0,764.9 1581.0,772.4 1584.0,779.9 1587.0,787.2 1590.0,794.4 1593.0,801.4 1596.0,808.3 1599.0,815.0 1602.0,821.5 1605.0,827.7 1608.0,833.8 1611.0,839.7 1614.0,845.3 1617.0,850.7 1620.0,855.9 1623.0,860.8 1626.0,865.6 1629.0,870.0 1632.0,874.3 1635.0,878.3 1638.0,882.1 1641.0,885.6 1644.0,889.0 1647.0,892.0 1650.0,894.9 1653.0,897.5 1656.0,899.9 1659.0,902.1 1662.0,904.0 1665.0,905.7 1668.0,907.1 1671.0,908.3 1674.0,909.3 1677.0,910.1 1680.0,910.6 1683.0,910.9 1686.0,910.9 1689.0,910.7 1692.0,910.3 1695.0,909.7 1698.0,908.8 1701.0,907.7 1704.0,906.3 1707.0,904.8 1710.0,903.0 1713.0,901.0 1716.0,898.9 1719.0,896.5 1722.0,893.9 1725.0,891.2 1728.0,888.3 1731.0,885.2 1734.0,881.9 1737.0,878.6 1740.0,875.0 1743.0,871.4 1746.0,867.6 1749.0,863.7 1752.0,859.7 1755.0,855.5 1758.0,851.3 1761.0,847.0 1764.0,842.6 1767.0,838.1 1770.0,833.5 1773.0,828.8 1776.0,824.0 1779.0,819.1 1782.0,814.2 1785.0,809.1 1788.0,804.0 1791.0,798.7 1794.0,793.4 1797.0,787.9 1800.0,782.4 1803.0,776.7 1806.0,770.9 1809.0,765.0 1812.0,759.0 1815.0,752.9 1818.0,746.7 1821.0,740.3 1824.0,733.9 1827.0,727.3 1830.0,720.6 1833.0,713.8 1836.0,706.8 1839.0,699.8 1842.0,692.6 1845.0,685.4 1848.0,678.0 1851.0,670.6 1854.0,663.1 1857.0,655.5 1860.0,647.8 1863.0,640.1 1866.0,632.3 1869.0,624.5 1872.0,616.6 1875.0,608.7 1878.0,600.8 1881.0,592.9 1884.0,585.1 1887.0,577.2 1890.0,569.4 1893.0,561.6 1896.0,553.9 1899.0,546.3 1902.0,538.8 1905.0,531.4 1908.0,524.1 1911.0,516.9 1914.0,509.9 1917.0,503.1 1920.0,496.4 1923.0,490.0 1926.0,483.7 1929.0,477.7 1932.0,471.9 1935.0,466.4 1938.0,461.1 1941.0,456.0 1944.0,451.3 1947.0,446.8 1950.0,442.5 1953.0,438.6 1956.0,434.9 1959.0,431.5 1962.0,428.4 1965.0,425.6 1968.0,423.0 1971.0,420.7 1974.0,418.7 1977.0,417.0 1980.0,415.5 1983.0,414.2 1986.0,413.2 1989.0,412.4 1992.0,411.8 1995.0,411.5 1996.0,411.4 1996.0,1110" fill="#4a7a08"/><polygon points="726.0,1110 726.0,433.6 729.0,433.8 732.0,434.3 735.0,434.9 738.0,435.7 741.0,436.7 744.0,437.8 747.0,439.2 750.0,440.6 753.0,442.3 756.0,444.1 759.0,446.1 762.0,448.2 765.0,450.5 768.0,453.0 771.0,455.6 774.0,458.4 777.0,461.4 780.0,464.5 783.0,467.7 786.0,471.2 789.0,474.7 792.0,478.4 795.0,482.3 798.0,486.3 801.0,490.4 804.0,494.7 807.0,499.1 810.0,503.6 813.0,508.2 816.0,512.9 819.0,517.8 822.0,522.7 825.0,527.7 828.0,532.8 831.0,538.0 834.0,543.3 837.0,548.7 840.0,554.1 843.0,559.6 846.0,565.2 849.0,570.9 852.0,576.6 855.0,582.4 858.0,588.3 861.0,594.3 864.0,600.4 867.0,606.6 870.0,612.9 873.0,619.3 876.0,625.9 879.0,632.5 882.0,639.2 885.0,646.1 888.0,653.1 891.0,660.1 894.0,667.3 897.0,674.7 900.0,682.1 903.0,689.6 906.0,697.2 909.0,704.9 912.0,712.6 915.0,720.5 918.0,728.3 921.0,736.2 924.0,744.1 927.0,752.0 930.0,759.9 933.0,767.7 936.0,775.5 939.0,783.2 942.0,790.8 945.0,798.4 948.0,805.8 951.0,813.0 954.0,820.1 957.0,827.1 960.0,833.8 963.0,840.4 966.0,846.8 969.0,853.0 972.0,858.9 975.0,864.7 978.0,870.2 981.0,875.5 984.0,880.6 987.0,885.4 990.0,890.0 993.0,894.4 996.0,898.5 999.0,902.4 1002.0,906.1 1005.0,909.5 1008.0,912.7 1011.0,915.7 1014.0,918.4 1017.0,920.9 1020.0,923.2 1023.0,925.2 1026.0,927.0 1029.0,928.6 1032.0,929.9 1035.0,931.0 1038.0,931.9 1041.0,932.6 1044.0,933.0 1047.0,933.1 1050.0,933.0 1053.0,932.7 1056.0,932.2 1059.0,931.4 1062.0,930.4 1065.0,929.2 1068.0,927.8 1071.0,926.1 1074.0,924.2 1077.0,922.1 1080.0,919.9 1083.0,917.4 1086.0,914.7 1089.0,911.9 1092.0,908.9 1095.0,905.8 1098.0,902.4 1101.0,899.0 1104.0,895.4 1107.0,891.7 1110.0,887.8 1113.0,883.9 1116.0,879.8 1119.0,875.6 1122.0,871.4 1125.0,867.0 1128.0,862.5 1131.0,858.0 1134.0,853.3 1137.0,848.6 1140.0,843.8 1143.0,838.8 1146.0,833.8 1149.0,828.7 1152.0,823.5 1155.0,818.2 1158.0,812.8 1161.0,807.3 1164.0,801.7 1167.0,796.0 1170.0,790.2 1173.0,784.2 1176.0,778.2 1179.0,772.0 1182.0,765.7 1185.0,759.3 1188.0,752.8 1191.0,746.1 1194.0,739.4 1197.0,732.5 1200.0,725.5 1203.0,718.4 1206.0,711.2 1209.0,703.9 1212.0,696.5 1215.0,689.0 1218.0,681.5 1221.0,673.8 1224.0,666.1 1227.0,658.4 1230.0,650.6 1233.0,642.7 1236.0,634.8 1239.0,627.0 1242.0,619.1 1245.0,611.2 1248.0,603.3 1251.0,595.5 1254.0,587.7 1257.0,579.9 1260.0,572.3 1263.0,564.7 1266.0,557.2 1269.0,549.9 1272.0,542.7 1275.0,535.6 1278.0,528.7 1281.0,521.9 1284.0,515.4 1287.0,509.0 1290.0,502.9 1293.0,497.0 1296.0,491.3 1299.0,485.9 1302.0,480.7 1305.0,475.8 1308.0,471.2 1311.0,466.8 1314.0,462.7 1317.0,458.9 1320.0,455.4 1323.0,452.1 1326.0,449.1 1329.0,446.4 1332.0,444.0 1335.0,441.9 1338.0,440.0 1341.0,438.4 1344.0,437.0 1347.0,435.8 1350.0,434.9 1353.0,434.2 1356.0,433.8 1359.0,433.5 1362.0,433.5 1365.0,433.7 1368.0,434.0 1371.0,434.5 1374.0,435.3 1377.0,436.2 1380.0,437.2 1383.0,438.5 1386.0,439.9 1389.0,441.5 1392.0,443.2 1395.0,445.1 1398.0,447.2 1401.0,449.4 1404.0,451.8 1407.0,454.3 1410.0,457.0 1413.0,459.9 1416.0,462.9 1419.0,466.1 1422.0,469.4 1425.0,472.9 1428.0,476.6 1431.0,480.3 1434.0,484.3 1437.0,488.3 1440.0,492.5 1443.0,496.9 1446.0,501.3 1449.0,505.9 1452.0,510.6 1455.0,515.3 1458.0,520.2 1461.0,525.2 1464.0,530.3 1467.0,535.4 1470.0,540.7 1473.0,546.0 1476.0,551.4 1479.0,556.8 1482.0,562.4 1485.0,568.0 1488.0,573.7 1491.0,579.5 1494.0,585.4 1497.0,591.3 1500.0,597.4 1503.0,603.5 1506.0,609.8 1509.0,616.1 1512.0,622.6 1515.0,629.2 1518.0,635.8 1521.0,642.6 1524.0,649.5 1527.0,656.6 1530.0,663.7 1533.0,671.0 1536.0,678.4 1539.0,685.8 1542.0,693.4 1545.0,701.0 1548.0,708.8 1551.0,716.5 1554.0,724.4 1557.0,732.3 1560.0,740.2 1563.0,748.1 1566.0,755.9 1569.0,763.8 1572.0,771.6 1575.0,779.4 1578.0,787.0 1581.0,794.6 1584.0,802.1 1587.0,809.4 1590.0,816.6 1593.0,823.6 1596.0,830.5 1599.0,837.1 1602.0,843.6 1605.0,849.9 1608.0,856.0 1611.0,861.8 1614.0,867.5 1617.0,872.9 1620.0,878.1 1623.0,883.0 1626.0,887.7 1629.0,892.2 1632.0,896.5 1635.0,900.5 1638.0,904.3 1641.0,907.8 1644.0,911.1 1647.0,914.2 1650.0,917.1 1653.0,919.7 1656.0,922.1 1659.0,924.2 1662.0,926.2 1665.0,927.8 1668.0,929.3 1671.0,930.5 1674.0,931.5 1677.0,932.3 1680.0,932.8 1683.0,933.1 1686.0,933.1 1689.0,932.9 1692.0,932.5 1695.0,931.8 1698.0,931.0 1701.0,929.8 1704.0,928.5 1707.0,927.0 1710.0,925.2 1713.0,923.2 1716.0,921.0 1719.0,918.7 1722.0,916.1 1725.0,913.3 1728.0,910.4 1731.0,907.4 1734.0,904.1 1737.0,900.7 1740.0,897.2 1743.0,893.5 1746.0,889.8 1749.0,885.9 1752.0,881.8 1755.0,877.7 1758.0,873.5 1761.0,869.2 1764.0,864.8 1767.0,860.3 1770.0,855.7 1773.0,851.0 1776.0,846.2 1779.0,841.3 1782.0,836.3 1785.0,831.3 1788.0,826.1 1791.0,820.9 1794.0,815.5 1797.0,810.1 1800.0,804.5 1803.0,798.9 1806.0,793.1 1809.0,787.2 1812.0,781.2 1815.0,775.1 1818.0,768.9 1821.0,762.5 1824.0,756.0 1827.0,749.5 1830.0,742.8 1833.0,735.9 1836.0,729.0 1839.0,722.0 1842.0,714.8 1845.0,707.6 1848.0,700.2 1851.0,692.8 1854.0,685.2 1857.0,677.6 1860.0,670.0 1863.0,662.2 1866.0,654.5 1869.0,646.6 1872.0,638.8 1875.0,630.9 1878.0,623.0 1881.0,615.1 1884.0,607.2 1887.0,599.4 1890.0,591.6 1893.0,583.8 1896.0,576.1 1899.0,568.5 1902.0,561.0 1905.0,553.5 1908.0,546.2 1911.0,539.1 1914.0,532.1 1917.0,525.3 1920.0,518.6 1923.0,512.2 1926.0,505.9 1929.0,499.9 1932.0,494.1 1935.0,488.6 1938.0,483.3 1941.0,478.2 1944.0,473.4 1947.0,468.9 1950.0,464.7 1953.0,460.8 1956.0,457.1 1959.0,453.7 1962.0,450.6 1965.0,447.8 1968.0,445.2 1971.0,442.9 1974.0,440.9 1977.0,439.1 1980.0,437.6 1983.0,436.4 1986.0,435.3 1989.0,434.6 1992.0,434.0 1995.0,433.6 1996.0,433.6 1996.0,1110" fill="url(#gM)"/><polygon points="726.0,1110 726.0,589.9 729.0,589.5 732.0,589.2 735.0,589.1 738.0,589.2 741.0,589.3 744.0,589.6 747.0,589.9 750.0,590.4 753.0,591.0 756.0,591.6 759.0,592.4 762.0,593.2 765.0,594.1 768.0,595.0 771.0,596.1 774.0,597.2 777.0,598.4 780.0,599.7 783.0,601.1 786.0,602.5 789.0,604.1 792.0,605.8 795.0,607.5 798.0,609.4 801.0,611.4 804.0,613.5 807.0,615.8 810.0,618.2 813.0,620.7 816.0,623.4 819.0,626.2 822.0,629.2 825.0,632.4 828.0,635.7 831.0,639.1 834.0,642.8 837.0,646.6 840.0,650.5 843.0,654.7 846.0,659.0 849.0,663.5 852.0,668.1 855.0,672.9 858.0,677.8 861.0,682.9 864.0,688.1 867.0,693.5 870.0,699.0 873.0,704.6 876.0,710.4 879.0,716.2 882.0,722.2 885.0,728.3 888.0,734.5 891.0,740.8 894.0,747.2 897.0,753.6 900.0,760.2 903.0,766.8 906.0,773.4 909.0,780.2 912.0,787.0 915.0,793.8 918.0,800.7 921.0,807.6 924.0,814.5 927.0,821.5 930.0,828.4 933.0,835.4 936.0,842.4 939.0,849.3 942.0,856.3 945.0,863.2 948.0,870.0 951.0,876.8 954.0,883.6 957.0,890.2 960.0,896.8 963.0,903.3 966.0,909.6 969.0,915.8 972.0,921.9 975.0,927.9 978.0,933.6 981.0,939.2 984.0,944.6 987.0,949.8 990.0,954.8 993.0,959.5 996.0,964.1 999.0,968.4 1002.0,972.4 1005.0,976.2 1008.0,979.8 1011.0,983.0 1014.0,986.1 1017.0,988.9 1020.0,991.4 1023.0,993.7 1026.0,995.7 1029.0,997.5 1032.0,999.1 1035.0,1000.5 1038.0,1001.6 1041.0,1002.5 1044.0,1003.3 1047.0,1003.8 1050.0,1004.2 1053.0,1004.4 1056.0,1004.5 1059.0,1004.4 1062.0,1004.2 1065.0,1003.8 1068.0,1003.4 1071.0,1002.8 1074.0,1002.2 1077.0,1001.4 1080.0,1000.6 1083.0,999.7 1086.0,998.7 1089.0,997.6 1092.0,996.4 1095.0,995.1 1098.0,993.8 1101.0,992.4 1104.0,990.8 1107.0,989.2 1110.0,987.5 1113.0,985.7 1116.0,983.8 1119.0,981.8 1122.0,979.6 1125.0,977.3 1128.0,975.0 1131.0,972.4 1134.0,969.8 1137.0,967.0 1140.0,964.1 1143.0,961.0 1146.0,957.8 1149.0,954.4 1152.0,950.9 1155.0,947.3 1158.0,943.5 1161.0,939.6 1164.0,935.5 1167.0,931.3 1170.0,927.0 1173.0,922.5 1176.0,917.9 1179.0,913.2 1182.0,908.3 1185.0,903.3 1188.0,898.2 1191.0,893.0 1194.0,887.6 1197.0,882.1 1200.0,876.5 1203.0,870.7 1206.0,864.9 1209.0,858.9 1212.0,852.8 1215.0,846.6 1218.0,840.3 1221.0,833.9 1224.0,827.4 1227.0,820.7 1230.0,814.0 1233.0,807.1 1236.0,800.2 1239.0,793.2 1242.0,786.1 1245.0,779.0 1248.0,771.7 1251.0,764.5 1254.0,757.2 1257.0,749.8 1260.0,742.5 1263.0,735.2 1266.0,727.9 1269.0,720.7 1272.0,713.5 1275.0,706.3 1278.0,699.3 1281.0,692.4 1284.0,685.6 1287.0,679.0 1290.0,672.5 1293.0,666.2 1296.0,660.1 1299.0,654.3 1302.0,648.6 1305.0,643.2 1308.0,638.0 1311.0,633.1 1314.0,628.5 1317.0,624.1 1320.0,620.0 1323.0,616.2 1326.0,612.7 1329.0,609.4 1332.0,606.4 1335.0,603.7 1338.0,601.2 1341.0,599.0 1344.0,597.1 1347.0,595.4 1350.0,593.9 1353.0,592.7 1356.0,591.6 1359.0,590.8 1362.0,590.1 1365.0,589.7 1368.0,589.3 1371.0,589.2 1374.0,589.1 1377.0,589.2 1380.0,589.4 1383.0,589.7 1386.0,590.2 1389.0,590.7 1392.0,591.3 1395.0,592.0 1398.0,592.8 1401.0,593.6 1404.0,594.5 1407.0,595.6 1410.0,596.6 1413.0,597.8 1416.0,599.0 1419.0,600.4 1422.0,601.8 1425.0,603.3 1428.0,604.9 1431.0,606.6 1434.0,608.4 1437.0,610.4 1440.0,612.4 1443.0,614.6 1446.0,617.0 1449.0,619.4 1452.0,622.0 1455.0,624.8 1458.0,627.7 1461.0,630.8 1464.0,634.0 1467.0,637.4 1470.0,640.9 1473.0,644.7 1476.0,648.5 1479.0,652.6 1482.0,656.8 1485.0,661.2 1488.0,665.7 1491.0,670.4 1494.0,675.3 1497.0,680.3 1500.0,685.5 1503.0,690.8 1506.0,696.2 1509.0,701.8 1512.0,707.5 1515.0,713.3 1518.0,719.2 1521.0,725.3 1524.0,731.4 1527.0,737.6 1530.0,744.0 1533.0,750.4 1536.0,756.9 1539.0,763.5 1542.0,770.1 1545.0,776.8 1548.0,783.6 1551.0,790.4 1554.0,797.2 1557.0,804.1 1560.0,811.0 1563.0,818.0 1566.0,824.9 1569.0,831.9 1572.0,838.9 1575.0,845.8 1578.0,852.8 1581.0,859.7 1584.0,866.6 1587.0,873.4 1590.0,880.2 1593.0,886.9 1596.0,893.5 1599.0,900.0 1602.0,906.4 1605.0,912.7 1608.0,918.9 1611.0,924.9 1614.0,930.8 1617.0,936.4 1620.0,941.9 1623.0,947.2 1626.0,952.3 1629.0,957.2 1632.0,961.8 1635.0,966.2 1638.0,970.4 1641.0,974.3 1644.0,978.0 1647.0,981.4 1650.0,984.6 1653.0,987.5 1656.0,990.2 1659.0,992.6 1662.0,994.7 1665.0,996.7 1668.0,998.3 1671.0,999.8 1674.0,1001.0 1677.0,1002.1 1680.0,1002.9 1683.0,1003.6 1686.0,1004.0 1689.0,1004.3 1692.0,1004.5 1695.0,1004.4 1698.0,1004.3 1701.0,1004.0 1704.0,1003.6 1707.0,1003.1 1710.0,1002.5 1713.0,1001.8 1716.0,1001.0 1719.0,1000.1 1722.0,999.2 1725.0,998.1 1728.0,997.0 1731.0,995.8 1734.0,994.5 1737.0,993.1 1740.0,991.6 1743.0,990.1 1746.0,988.4 1749.0,986.6 1752.0,984.8 1755.0,982.8 1758.0,980.7 1761.0,978.5 1764.0,976.2 1767.0,973.7 1770.0,971.1 1773.0,968.4 1776.0,965.5 1779.0,962.6 1782.0,959.4 1785.0,956.1 1788.0,952.7 1791.0,949.1 1794.0,945.4 1797.0,941.6 1800.0,937.6 1803.0,933.5 1806.0,929.2 1809.0,924.8 1812.0,920.2 1815.0,915.6 1818.0,910.8 1821.0,905.8 1824.0,900.8 1827.0,895.6 1830.0,890.3 1833.0,884.9 1836.0,879.3 1839.0,873.6 1842.0,867.8 1845.0,861.9 1848.0,855.9 1851.0,849.8 1854.0,843.5 1857.0,837.1 1860.0,830.7 1863.0,824.1 1866.0,817.4 1869.0,810.6 1872.0,803.7 1875.0,796.7 1878.0,789.7 1881.0,782.5 1884.0,775.3 1887.0,768.1 1890.0,760.8 1893.0,753.5 1896.0,746.2 1899.0,738.9 1902.0,731.6 1905.0,724.3 1908.0,717.0 1911.0,709.9 1914.0,702.8 1917.0,695.8 1920.0,689.0 1923.0,682.3 1926.0,675.7 1929.0,669.4 1932.0,663.2 1935.0,657.2 1938.0,651.4 1941.0,645.9 1944.0,640.6 1947.0,635.5 1950.0,630.8 1953.0,626.3 1956.0,622.0 1959.0,618.1 1962.0,614.4 1965.0,611.0 1968.0,607.9 1971.0,605.0 1974.0,602.4 1977.0,600.1 1980.0,598.0 1983.0,596.2 1986.0,594.6 1989.0,593.3 1992.0,592.1 1995.0,591.2 1996.0,590.9 1996.0,1110" fill="url(#gG)"/><polygon points="726.0,1110 726.0,805.5 729.0,804.4 732.0,803.3 735.0,802.3 738.0,801.4 741.0,800.7 744.0,800.0 747.0,799.4 750.0,798.8 753.0,798.4 756.0,798.0 759.0,797.6 762.0,797.3 765.0,797.1 768.0,796.9 771.0,796.8 774.0,796.8 777.0,796.8 780.0,796.8 783.0,796.9 786.0,797.1 789.0,797.3 792.0,797.6 795.0,798.0 798.0,798.4 801.0,798.9 804.0,799.5 807.0,800.2 810.0,800.9 813.0,801.8 816.0,802.7 819.0,803.7 822.0,804.8 825.0,806.0 828.0,807.4 831.0,808.8 834.0,810.3 837.0,811.9 840.0,813.7 843.0,815.6 846.0,817.5 849.0,819.6 852.0,821.9 855.0,824.2 858.0,826.7 861.0,829.3 864.0,832.0 867.0,834.9 870.0,837.9 873.0,841.0 876.0,844.3 879.0,847.8 882.0,851.4 885.0,855.1 888.0,859.0 891.0,863.0 894.0,867.2 897.0,871.5 900.0,875.9 903.0,880.5 906.0,885.2 909.0,890.0 912.0,895.0 915.0,900.0 918.0,905.2 921.0,910.4 924.0,915.7 927.0,921.1 930.0,926.5 933.0,932.0 936.0,937.5 939.0,943.0 942.0,948.5 945.0,953.9 948.0,959.4 951.0,964.8 954.0,970.1 957.0,975.4 960.0,980.6 963.0,985.7 966.0,990.7 969.0,995.6 972.0,1000.3 975.0,1005.0 978.0,1009.5 981.0,1013.9 984.0,1018.2 987.0,1022.3 990.0,1026.4 993.0,1030.2 996.0,1034.0 999.0,1037.6 1002.0,1041.1 1005.0,1044.4 1008.0,1047.6 1011.0,1050.8 1014.0,1053.7 1017.0,1056.6 1020.0,1059.4 1023.0,1062.0 1026.0,1064.5 1029.0,1066.9 1032.0,1069.2 1035.0,1071.4 1038.0,1073.5 1041.0,1075.5 1044.0,1077.4 1047.0,1079.1 1050.0,1080.8 1053.0,1082.3 1056.0,1083.8 1059.0,1085.1 1062.0,1086.3 1065.0,1087.4 1068.0,1088.4 1071.0,1089.3 1074.0,1090.1 1077.0,1090.8 1080.0,1091.3 1083.0,1091.8 1086.0,1092.1 1089.0,1092.4 1092.0,1092.5 1095.0,1092.6 1098.0,1092.5 1101.0,1092.4 1104.0,1092.1 1107.0,1091.8 1110.0,1091.4 1113.0,1090.8 1116.0,1090.2 1119.0,1089.4 1122.0,1088.6 1125.0,1087.6 1128.0,1086.6 1131.0,1085.4 1134.0,1084.1 1137.0,1082.7 1140.0,1081.1 1143.0,1079.5 1146.0,1077.6 1149.0,1075.7 1152.0,1073.6 1155.0,1071.4 1158.0,1069.0 1161.0,1066.4 1164.0,1063.7 1167.0,1060.8 1170.0,1057.8 1173.0,1054.6 1176.0,1051.3 1179.0,1047.8 1182.0,1044.1 1185.0,1040.3 1188.0,1036.4 1191.0,1032.3 1194.0,1028.1 1197.0,1023.8 1200.0,1019.3 1203.0,1014.8 1206.0,1010.2 1209.0,1005.5 1212.0,1000.7 1215.0,995.8 1218.0,990.9 1221.0,986.0 1224.0,981.0 1227.0,976.0 1230.0,971.0 1233.0,966.0 1236.0,961.0 1239.0,956.0 1242.0,951.0 1245.0,946.0 1248.0,941.0 1251.0,936.1 1254.0,931.2 1257.0,926.3 1260.0,921.5 1263.0,916.7 1266.0,912.0 1269.0,907.3 1272.0,902.6 1275.0,898.0 1278.0,893.5 1281.0,889.0 1284.0,884.5 1287.0,880.2 1290.0,875.9 1293.0,871.6 1296.0,867.5 1299.0,863.4 1302.0,859.5 1305.0,855.6 1308.0,851.8 1311.0,848.1 1314.0,844.6 1317.0,841.2 1320.0,837.8 1323.0,834.7 1326.0,831.6 1329.0,828.7 1332.0,826.0 1335.0,823.3 1338.0,820.9 1341.0,818.5 1344.0,816.4 1347.0,814.3 1350.0,812.4 1353.0,810.7 1356.0,809.0 1359.0,807.5 1362.0,806.2 1365.0,804.9 1368.0,803.8 1371.0,802.8 1374.0,801.9 1377.0,801.0 1380.0,800.3 1383.0,799.7 1386.0,799.1 1389.0,798.6 1392.0,798.1 1395.0,797.8 1398.0,797.5 1401.0,797.2 1404.0,797.0 1407.0,796.9 1410.0,796.8 1413.0,796.8 1416.0,796.8 1419.0,796.9 1422.0,797.0 1425.0,797.2 1428.0,797.5 1431.0,797.8 1434.0,798.2 1437.0,798.7 1440.0,799.2 1443.0,799.8 1446.0,800.6 1449.0,801.3 1452.0,802.2 1455.0,803.2 1458.0,804.3 1461.0,805.4 1464.0,806.7 1467.0,808.1 1470.0,809.5 1473.0,811.1 1476.0,812.8 1479.0,814.6 1482.0,816.5 1485.0,818.6 1488.0,820.7 1491.0,823.0 1494.0,825.4 1497.0,828.0 1500.0,830.6 1503.0,833.4 1506.0,836.4 1509.0,839.4 1512.0,842.7 1515.0,846.0 1518.0,849.5 1521.0,853.2 1524.0,857.0 1527.0,861.0 1530.0,865.1 1533.0,869.3 1536.0,873.7 1539.0,878.2 1542.0,882.8 1545.0,887.6 1548.0,892.5 1551.0,897.5 1554.0,902.6 1557.0,907.8 1560.0,913.1 1563.0,918.4 1566.0,923.8 1569.0,929.3 1572.0,934.7 1575.0,940.2 1578.0,945.7 1581.0,951.2 1584.0,956.7 1587.0,962.1 1590.0,967.5 1593.0,972.8 1596.0,978.0 1599.0,983.1 1602.0,988.2 1605.0,993.1 1608.0,998.0 1611.0,1002.7 1614.0,1007.3 1617.0,1011.7 1620.0,1016.1 1623.0,1020.3 1626.0,1024.4 1629.0,1028.3 1632.0,1032.1 1635.0,1035.8 1638.0,1039.3 1641.0,1042.8 1644.0,1046.1 1647.0,1049.2 1650.0,1052.3 1653.0,1055.2 1656.0,1058.0 1659.0,1060.7 1662.0,1063.3 1665.0,1065.7 1668.0,1068.1 1671.0,1070.4 1674.0,1072.5 1677.0,1074.5 1680.0,1076.5 1683.0,1078.3 1686.0,1080.0 1689.0,1081.6 1692.0,1083.1 1695.0,1084.4 1698.0,1085.7 1701.0,1086.9 1704.0,1087.9 1707.0,1088.9 1710.0,1089.7 1713.0,1090.4 1716.0,1091.1 1719.0,1091.6 1722.0,1092.0 1725.0,1092.3 1728.0,1092.5 1731.0,1092.6 1734.0,1092.6 1737.0,1092.5 1740.0,1092.3 1743.0,1092.0 1746.0,1091.6 1749.0,1091.1 1752.0,1090.5 1755.0,1089.8 1758.0,1089.0 1761.0,1088.1 1764.0,1087.1 1767.0,1086.0 1770.0,1084.7 1773.0,1083.4 1776.0,1081.9 1779.0,1080.3 1782.0,1078.6 1785.0,1076.7 1788.0,1074.7 1791.0,1072.5 1794.0,1070.2 1797.0,1067.7 1800.0,1065.1 1803.0,1062.3 1806.0,1059.3 1809.0,1056.2 1812.0,1053.0 1815.0,1049.6 1818.0,1046.0 1821.0,1042.3 1824.0,1038.4 1827.0,1034.4 1830.0,1030.2 1833.0,1026.0 1836.0,1021.6 1839.0,1017.1 1842.0,1012.5 1845.0,1007.8 1848.0,1003.1 1851.0,998.3 1854.0,993.4 1857.0,988.5 1860.0,983.5 1863.0,978.5 1866.0,973.5 1869.0,968.5 1872.0,963.5 1875.0,958.5 1878.0,953.5 1881.0,948.5 1884.0,943.5 1887.0,938.6 1890.0,933.6 1893.0,928.8 1896.0,923.9 1899.0,919.1 1902.0,914.3 1905.0,909.6 1908.0,904.9 1911.0,900.3 1914.0,895.7 1917.0,891.2 1920.0,886.7 1923.0,882.3 1926.0,878.0 1929.0,873.7 1932.0,869.6 1935.0,865.5 1938.0,861.4 1941.0,857.5 1944.0,853.7 1947.0,850.0 1950.0,846.3 1953.0,842.9 1956.0,839.5 1959.0,836.2 1962.0,833.1 1965.0,830.2 1968.0,827.3 1971.0,824.6 1974.0,822.1 1977.0,819.7 1980.0,817.4 1983.0,815.3 1986.0,813.3 1989.0,811.5 1992.0,809.8 1995.0,808.3 1996.0,807.8 1996.0,1110" fill="url(#gN)"/><polyline points="726.0,312.5 729.0,312.8 732.0,313.4 735.0,314.2 738.0,315.2 741.0,316.4 744.0,317.9 747.0,319.5 750.0,321.3 753.0,323.3 756.0,325.4 759.0,327.8 762.0,330.3 765.0,333.0 768.0,335.8 771.0,338.7 774.0,341.8 777.0,345.1 780.0,348.4 783.0,352.0 786.0,355.6 789.0,359.4 792.0,363.2 795.0,367.3 798.0,371.4 801.0,375.7 804.0,380.1 807.0,384.6 810.0,389.3 813.0,394.0 816.0,399.0 819.0,404.0 822.0,409.2 825.0,414.5 828.0,419.9 831.0,425.5 834.0,431.2 837.0,437.1 840.0,443.1 843.0,449.2 846.0,455.5 849.0,461.9 852.0,468.4 855.0,475.0 858.0,481.8 861.0,488.7 864.0,495.8 867.0,502.9 870.0,510.2 873.0,517.6 876.0,525.1 879.0,532.7 882.0,540.4 885.0,548.2 888.0,556.1 891.0,564.1 894.0,572.2 897.0,580.4 900.0,588.6 903.0,596.9 906.0,605.3 909.0,613.7 912.0,622.1 915.0,630.6 918.0,639.1 921.0,647.6 924.0,656.1 927.0,664.5 930.0,673.0 933.0,681.4 936.0,689.7 939.0,698.0 942.0,706.1 945.0,714.2 948.0,722.2 951.0,730.0 954.0,737.7 957.0,745.2 960.0,752.5 963.0,759.6 966.0,766.6 969.0,773.3 972.0,779.8 975.0,786.1 978.0,792.1 981.0,797.9 984.0,803.4 987.0,808.6 990.0,813.6 993.0,818.2 996.0,822.6 999.0,826.8 1002.0,830.6 1005.0,834.1 1008.0,837.4 1011.0,840.4 1014.0,843.1 1017.0,845.5 1020.0,847.7 1023.0,849.5 1026.0,851.1 1029.0,852.4 1032.0,853.5 1035.0,854.3 1038.0,854.8 1041.0,855.1 1044.0,855.1 1047.0,854.9 1050.0,854.4 1053.0,853.7 1056.0,852.7 1059.0,851.6 1062.0,850.2 1065.0,848.6 1068.0,846.7 1071.0,844.7 1074.0,842.4 1077.0,840.0 1080.0,837.4 1083.0,834.6 1086.0,831.6 1089.0,828.5 1092.0,825.2 1095.0,821.8 1098.0,818.2 1101.0,814.6 1104.0,810.7 1107.0,806.8 1110.0,802.8 1113.0,798.7 1116.0,794.5 1119.0,790.2 1122.0,785.8 1125.0,781.3 1128.0,776.8 1131.0,772.1 1134.0,767.4 1137.0,762.6 1140.0,757.7 1143.0,752.8 1146.0,747.7 1149.0,742.5 1152.0,737.2 1155.0,731.8 1158.0,726.3 1161.0,720.6 1164.0,714.8 1167.0,708.8 1170.0,702.6 1173.0,696.3 1176.0,689.8 1179.0,683.1 1182.0,676.3 1185.0,669.2 1188.0,661.9 1191.0,654.5 1194.0,646.9 1197.0,639.0 1200.0,631.0 1203.0,622.8 1206.0,614.5 1209.0,606.0 1212.0,597.4 1215.0,588.6 1218.0,579.7 1221.0,570.8 1224.0,561.8 1227.0,552.7 1230.0,543.6 1233.0,534.5 1236.0,525.3 1239.0,516.3 1242.0,507.2 1245.0,498.3 1248.0,489.4 1251.0,480.6 1254.0,472.0 1257.0,463.5 1260.0,455.2 1263.0,447.0 1266.0,439.1 1269.0,431.3 1272.0,423.7 1275.0,416.4 1278.0,409.2 1281.0,402.3 1284.0,395.7 1287.0,389.2 1290.0,383.1 1293.0,377.2 1296.0,371.5 1299.0,366.1 1302.0,360.9 1305.0,356.0 1308.0,351.4 1311.0,347.0 1314.0,342.9 1317.0,339.0 1320.0,335.4 1323.0,332.1 1326.0,329.0 1329.0,326.2 1332.0,323.7 1335.0,321.4 1338.0,319.4 1341.0,317.6 1344.0,316.1 1347.0,314.9 1350.0,313.9 1353.0,313.1 1356.0,312.6 1359.0,312.4 1362.0,312.4 1365.0,312.6 1368.0,313.1 1371.0,313.8 1374.0,314.7 1377.0,315.8 1380.0,317.1 1383.0,318.6 1386.0,320.4 1389.0,322.3 1392.0,324.3 1395.0,326.6 1398.0,329.0 1401.0,331.6 1404.0,334.3 1407.0,337.2 1410.0,340.3 1413.0,343.4 1416.0,346.7 1419.0,350.2 1422.0,353.8 1425.0,357.5 1428.0,361.3 1431.0,365.2 1434.0,369.3 1437.0,373.5 1440.0,377.9 1443.0,382.3 1446.0,386.9 1449.0,391.6 1452.0,396.5 1455.0,401.5 1458.0,406.6 1461.0,411.8 1464.0,417.2 1467.0,422.7 1470.0,428.4 1473.0,434.1 1476.0,440.1 1479.0,446.1 1482.0,452.3 1485.0,458.6 1488.0,465.1 1491.0,471.7 1494.0,478.4 1497.0,485.3 1500.0,492.2 1503.0,499.3 1506.0,506.5 1509.0,513.9 1512.0,521.3 1515.0,528.9 1518.0,536.5 1521.0,544.3 1524.0,552.2 1527.0,560.1 1530.0,568.2 1533.0,576.3 1536.0,584.5 1539.0,592.8 1542.0,601.1 1545.0,609.5 1548.0,617.9 1551.0,626.3 1554.0,634.8 1557.0,643.3 1560.0,651.8 1563.0,660.3 1566.0,668.8 1569.0,677.2 1572.0,685.5 1575.0,693.8 1578.0,702.1 1581.0,710.2 1584.0,718.2 1587.0,726.1 1590.0,733.8 1593.0,741.4 1596.0,748.9 1599.0,756.1 1602.0,763.1 1605.0,770.0 1608.0,776.6 1611.0,783.0 1614.0,789.1 1617.0,795.0 1620.0,800.6 1623.0,806.0 1626.0,811.1 1629.0,815.9 1632.0,820.5 1635.0,824.7 1638.0,828.7 1641.0,832.4 1644.0,835.8 1647.0,838.9 1650.0,841.8 1653.0,844.3 1656.0,846.6 1659.0,848.6 1662.0,850.4 1665.0,851.8 1668.0,853.0 1671.0,853.9 1674.0,854.6 1677.0,855.0 1680.0,855.1 1683.0,855.0 1686.0,854.7 1689.0,854.1 1692.0,853.2 1695.0,852.2 1698.0,850.9 1701.0,849.4 1704.0,847.7 1707.0,845.7 1710.0,843.6 1713.0,841.2 1716.0,838.7 1719.0,836.0 1722.0,833.1 1725.0,830.1 1728.0,826.9 1731.0,823.5 1734.0,820.0 1737.0,816.4 1740.0,812.7 1743.0,808.8 1746.0,804.8 1749.0,800.8 1752.0,796.6 1755.0,792.3 1758.0,788.0 1761.0,783.6 1764.0,779.1 1767.0,774.5 1770.0,769.8 1773.0,765.0 1776.0,760.2 1779.0,755.3 1782.0,750.2 1785.0,745.1 1788.0,739.9 1791.0,734.5 1794.0,729.1 1797.0,723.4 1800.0,717.7 1803.0,711.8 1806.0,705.7 1809.0,699.5 1812.0,693.1 1815.0,686.5 1818.0,679.7 1821.0,672.8 1824.0,665.6 1827.0,658.2 1830.0,650.7 1833.0,643.0 1836.0,635.0 1839.0,626.9 1842.0,618.7 1845.0,610.3 1848.0,601.7 1851.0,593.0 1854.0,584.2 1857.0,575.3 1860.0,566.3 1863.0,557.2 1866.0,548.1 1869.0,539.0 1872.0,529.9 1875.0,520.8 1878.0,511.7 1881.0,502.7 1884.0,493.8 1887.0,485.0 1890.0,476.3 1893.0,467.8 1896.0,459.3 1899.0,451.1 1902.0,443.0 1905.0,435.1 1908.0,427.5 1911.0,420.0 1914.0,412.8 1917.0,405.7 1920.0,399.0 1923.0,392.4 1926.0,386.1 1929.0,380.1 1932.0,374.3 1935.0,368.7 1938.0,363.5 1941.0,358.4 1944.0,353.7 1947.0,349.2 1950.0,344.9 1953.0,340.9 1956.0,337.2 1959.0,333.7 1962.0,330.5 1965.0,327.6 1968.0,324.9 1971.0,322.5 1974.0,320.4 1977.0,318.5 1980.0,316.8 1983.0,315.5 1986.0,314.3 1989.0,313.5 1992.0,312.9 1995.0,312.5 1996.0,312.4" fill="none" stroke="#ececec" stroke-width="3.2" stroke-linejoin="round"/><rect x="726" y="1109" width="1276" height="2" fill="#c8c6d6"/><rect x="808" y="1111" width="2" height="8" fill="#c8c6d6"/><rect x="966" y="1111" width="2" height="8" fill="#c8c6d6"/><rect x="1126" y="1111" width="2" height="8" fill="#c8c6d6"/><rect x="1286" y="1111" width="2" height="8" fill="#c8c6d6"/><rect x="1444" y="1111" width="2" height="8" fill="#c8c6d6"/><rect x="1604" y="1111" width="2" height="8" fill="#c8c6d6"/><rect x="1764" y="1111" width="2" height="8" fill="#c8c6d6"/><rect x="1922" y="1111" width="2" height="8" fill="#c8c6d6"/></svg>
<div class="t" style="top:214.5px;font-size:25px;color:#c6c4d6;font-weight:normal;font-family:'Liberation Sans',sans-serif;right:1337.4px;transform-origin:right top;transform:scaleX(1.0350);">100.00G</div>
<div class="t" style="top:390.5px;font-size:25px;color:#c6c4d6;font-weight:normal;font-family:'Liberation Sans',sans-serif;right:1337.4px;transform-origin:right top;transform:scaleX(1.0313);">80.00G</div>
<div class="t" style="top:566.5px;font-size:25px;color:#c6c4d6;font-weight:normal;font-family:'Liberation Sans',sans-serif;right:1337.4px;transform-origin:right top;transform:scaleX(1.0313);">60.00G</div>
<div class="t" style="top:742.5px;font-size:25px;color:#c6c4d6;font-weight:normal;font-family:'Liberation Sans',sans-serif;right:1337.4px;transform-origin:right top;transform:scaleX(1.0313);">40.00G</div>
<div class="t" style="top:918.5px;font-size:25px;color:#c6c4d6;font-weight:normal;font-family:'Liberation Sans',sans-serif;right:1337.4px;transform-origin:right top;transform:scaleX(1.0313);">20.00G</div>
<div class="t" style="top:1094.5px;font-size:25px;color:#c6c4d6;font-weight:normal;font-family:'Liberation Sans',sans-serif;right:1337.4px;transform-origin:right top;transform:scaleX(1.0745);">0.00</div>
<div class="t" style="top:1122.0px;font-size:25px;color:#c6c4d6;font-weight:bold;font-family:'Liberation Sans',sans-serif;left:809.0px;transform-origin:center top;transform:translateX(-50%) scaleX(1.0283);">9</div>
<div class="t" style="top:1122.0px;font-size:25px;color:#c6c4d6;font-weight:normal;font-family:'Liberation Sans',sans-serif;left:967.0px;transform-origin:center top;transform:translateX(-50%) scaleX(1.0723);">06:00</div>
<div class="t" style="top:1122.0px;font-size:25px;color:#c6c4d6;font-weight:normal;font-family:'Liberation Sans',sans-serif;left:1127.0px;transform-origin:center top;transform:translateX(-50%) scaleX(1.0723);">12:00</div>
<div class="t" style="top:1122.0px;font-size:25px;color:#c6c4d6;font-weight:normal;font-family:'Liberation Sans',sans-serif;left:1287.0px;transform-origin:center top;transform:translateX(-50%) scaleX(1.0723);">18:00</div>
<div class="t" style="top:1122.0px;font-size:25px;color:#c6c4d6;font-weight:bold;font-family:'Liberation Sans',sans-serif;left:1445.0px;transform-origin:center top;transform:translateX(-50%) scaleX(1.1146);">10</div>
<div class="t" style="top:1122.0px;font-size:25px;color:#c6c4d6;font-weight:normal;font-family:'Liberation Sans',sans-serif;left:1605.0px;transform-origin:center top;transform:translateX(-50%) scaleX(1.0723);">06:00</div>
<div class="t" style="top:1122.0px;font-size:25px;color:#c6c4d6;font-weight:normal;font-family:'Liberation Sans',sans-serif;left:1765.0px;transform-origin:center top;transform:translateX(-50%) scaleX(1.0723);">12:00</div>
<div class="t" style="top:1122.0px;font-size:25px;color:#c6c4d6;font-weight:normal;font-family:'Liberation Sans',sans-serif;left:1923.0px;transform-origin:center top;transform:translateX(-50%) scaleX(1.0723);">18:00</div>
<div class="a" style="left:608px;top:1169px;width:1408px;height:20px;background:#2c3543;"></div>
<div class="a" style="left:1242px;top:1174px;width:140px;height:2px;background:#9ca3af;"></div>
<div class="a" style="left:1242px;top:1180px;width:140px;height:2px;background:#9ca3af;"></div>
<div class="a" style="left:608px;top:1205px;width:1408px;height:460px;border-radius:16px 16px 0 0;overflow:hidden;box-shadow:0 4px 10px rgba(0,0,0,.25);"><div class="a" style="left:0;top:0;width:1408px;height:64px;background:#374151;"></div><div class="a" style="left:0;top:64px;width:1408px;height:76px;background:#1f2937;"></div><div class="a" style="left:0;top:140px;width:1408px;height:116px;background:#374151;"></div><div class="a" style="left:0;top:256px;width:1408px;height:76px;background:#1f2937;"></div><div class="a" style="left:0;top:332px;width:1408px;height:80px;background:#374151;"></div><div class="a" style="left:0;top:412px;width:1408px;height:60px;background:#1f2937;"></div></div>
<div class="t" style="top:1226.6px;font-size:23px;color:#e5e7eb;font-weight:bold;font-family:'Liberation Sans',sans-serif;left:796.4px;transform-origin:left top;transform:scaleX(0.9076);">SRC AS</div>
<div class="t" style="top:1226.6px;font-size:23px;color:#e5e7eb;font-weight:bold;font-family:'Liberation Sans',sans-serif;right:834.1px;transform-origin:right top;transform:scaleX(1.0675);">MIN</div>
<div class="t" style="top:1226.6px;font-size:23px;color:#e5e7eb;font-weight:bold;font-family:'Liberation Sans',sans-serif;right:580.8px;transform-origin:right top;transform:scaleX(0.9803);">MAX</div>
<div class="t" style="top:1226.6px;font-size:23px;color:#e5e7eb;font-weight:bold;font-family:'Liberation Sans',sans-serif;right:327.4px;transform-origin:right top;transform:scaleX(0.9594);">AVERAGE</div>
<div class="t" style="top:1226.6px;font-size:23px;color:#e5e7eb;font-weight:bold;font-family:'Liberation Sans',sans-serif;right:74.1px;transform-origin:right top;transform:scaleX(1.0361);">~95TH</div>
<div class="a" style="left:658px;top:1287px;width:40px;height:40px;background:#5b74fe;border-radius:8px;"></div>
<div class="t" style="top:1294.7px;font-size:28px;color:#e5e7eb;font-weight:normal;font-family:'Liberation Sans',sans-serif;left:796.4px;">2906: Netflix</div>
<div class="t" style="top:1294.7px;font-size:28px;color:#e5e7eb;font-weight:normal;font-family:'Liberation Sans',sans-serif;right:834.1px;">1.75Gbps</div>
<div class="t" style="top:1294.7px;font-size:28px;color:#e5e7eb;font-weight:normal;font-family:'Liberation Sans',sans-serif;right:580.8px;">35.44Gbps</div>
<div class="t" style="top:1294.7px;font-size:28px;color:#e5e7eb;font-weight:normal;font-family:'Liberation Sans',sans-serif;right:327.4px;">18.54Gbps</div>
<div class="t" style="top:1294.7px;font-size:28px;color:#e5e7eb;font-weight:normal;font-family:'Liberation Sans',sans-serif;right:74.1px;">35.25Gbps</div>
<div class="a" style="left:658px;top:1383px;width:40px;height:40px;background:#b44b00;border-radius:8px;"></div>
<div class="t" style="top:1370.8px;font-size:28px;color:#e5e7eb;font-weight:normal;font-family:'Liberation Sans',sans-serif;left:796.4px;">15169:</div>
<div class="t" style="top:1410.4px;font-size:28px;color:#e5e7eb;font-weight:normal;font-family:'Liberation Sans',sans-serif;left:796.4px;">Google</div>
<div class="t" style="top:1390.7px;font-size:28px;color:#e5e7eb;font-weight:normal;font-family:'Liberation Sans',sans-serif;right:834.1px;">8.29Gbps</div>
<div class="t" style="top:1390.7px;font-size:28px;color:#e5e7eb;font-weight:normal;font-family:'Liberation Sans',sans-serif;right:580.8px;">25.11Gbps</div>
<div class="t" style="top:1390.7px;font-size:28px;color:#e5e7eb;font-weight:normal;font-family:'Liberation Sans',sans-serif;right:327.4px;">16.66Gbps</div>
<div class="t" style="top:1390.7px;font-size:28px;color:#e5e7eb;font-weight:normal;font-family:'Liberation Sans',sans-serif;right:74.1px;">24.89Gbps</div>
<div class="a" style="left:658px;top:1479px;width:40px;height:40px;background:#0094b6;border-radius:8px;"></div>
<div class="t" style="top:1486.7px;font-size:28px;color:#e5e7eb;font-weight:normal;font-family:'Liberation Sans',sans-serif;left:796.4px;">32934: Meta</div>
<div class="t" style="top:1486.7px;font-size:28px;color:#e5e7eb;font-weight:normal;font-family:'Liberation Sans',sans-serif;right:834.1px;">6.54Gbps</div>
<div class="t" style="top:1486.7px;font-size:28px;color:#e5e7eb;font-weight:normal;font-family:'Liberation Sans',sans-serif;right:580.8px;">19.20Gbps</div>
<div class="t" style="top:1486.7px;font-size:28px;color:#e5e7eb;font-weight:normal;font-family:'Liberation Sans',sans-serif;right:327.4px;">12.86Gbps</div>
<div class="t" style="top:1486.7px;font-size:28px;color:#e5e7eb;font-weight:normal;font-family:'Liberation Sans',sans-serif;right:74.1px;">19.10Gbps</div>
<div class="a" style="left:658px;top:1557px;width:40px;height:40px;background:#467a00;border-radius:8px;"></div>
<div class="t" style="top:1565.1px;font-size:28px;color:#e5e7eb;font-weight:normal;font-family:'Liberation Sans',sans-serif;left:796.4px;">54113: Fastly</div>
<div class="t" style="top:1565.1px;font-size:28px;color:#e5e7eb;font-weight:normal;font-family:'Liberation Sans',sans-serif;right:834.1px;">968.85Mbps</div>
<div class="t" style="top:1565.1px;font-size:28px;color:#e5e7eb;font-weight:normal;font-family:'Liberation Sans',sans-serif;right:580.8px;">2.85Gbps</div>
<div class="t" style="top:1565.1px;font-size:28px;color:#e5e7eb;font-weight:normal;font-family:'Liberation Sans',sans-serif;right:327.4px;">2.48Gbps</div>
<div class="t" style="top:1565.1px;font-size:28px;color:#e5e7eb;font-weight:normal;font-family:'Liberation Sans',sans-serif;right:74.1px;">2.82Gbps</div>
<div class="t" style="top:1640.7px;font-size:28px;color:#e5e7eb;font-weight:normal;font-family:'Liberation Sans',sans-serif;left:796.4px;">20940:</div>
<div class="a" style="left:560px;top:160px;width:32px;height:32px;border-radius:50%;background:#111827;box-shadow:0 0 6px 2px rgba(120,130,150,.22);"></div>
<svg class="a" style="left:559.2px;top:159.8px;" width="32.0" height="32.0" viewBox="0 0 20 20"><path fill="#ffffff" fill-rule="evenodd" d="M12.707 5.293a1 1 0 010 1.414L9.414 10l3.293 3.293a1 1 0 01-1.414 1.414l-4-4a1 1 0 010-1.414l4-4a1 1 0 011.414 0z"/></svg>
</body></html>
